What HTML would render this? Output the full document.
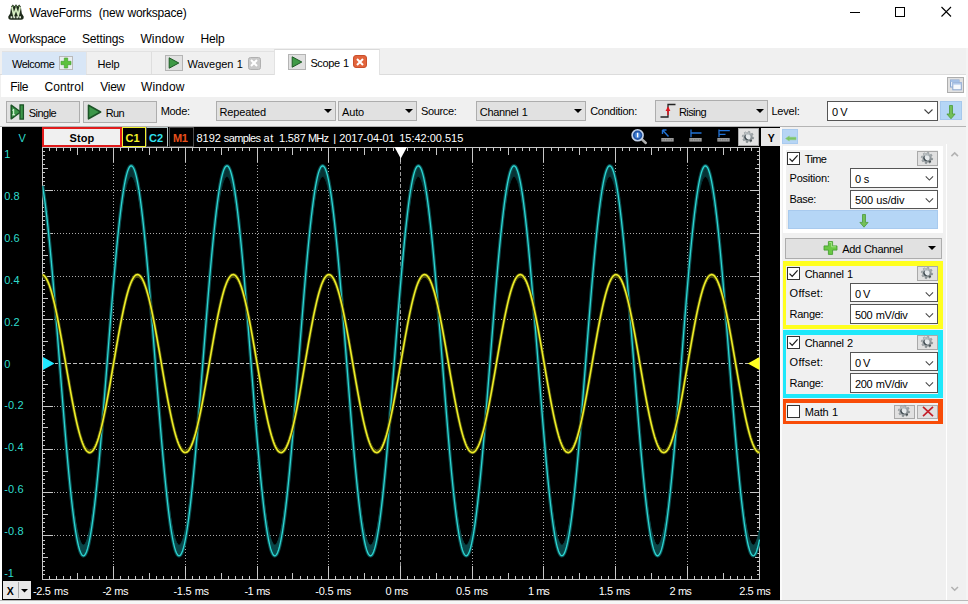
<!DOCTYPE html>
<html lang="en"><head><meta charset="utf-8"><title>WaveForms (new workspace)</title>
<style>
html,body{margin:0;padding:0;}
body{width:968px;height:604px;position:relative;overflow:hidden;background:#fff;
 font-family:"Liberation Sans",sans-serif;}
.t{position:absolute;white-space:pre;line-height:16px;}
.btn{background:#e1e1e1;border:1px solid #adadad;box-sizing:border-box;}
.combo{background:#e1e1e1;border:1px solid #adadad;box-sizing:border-box;}
.edit{background:#fff;border:1px solid #555;box-sizing:border-box;}
.abs{position:absolute;}
svg{position:absolute;overflow:visible;}
</style></head><body>
<div class="" style="position:absolute;left:0px;top:0px;width:968px;height:48px;background:#fff;"></div><svg style="left:8px;top:4px" width="16" height="16" viewBox="0 0 16 16">
<path d="M3.2 2.4 L4.8 0.5 L6.4 2.2 L8 0.3 L9.6 2.2 L11.2 0.5 L12.8 2.4 L13.8 9.5 L15.7 12.5 Q16 15.8 13 15.8 L3 15.8 Q0 15.8 0.3 12.5 L2.2 9.5 Z" fill="#1f2b1c"/>
<path d="M3.9 3 L5.7 11 L8 5 L10.3 11 L12.1 3" fill="none" stroke="#d4ecc0" stroke-width="1.8"/>
<path d="M4.9 1.6 V3 M8 1.4 V3 M11.1 1.6 V3" stroke="#7fae68" stroke-width="1"/>
<path d="M2.6 13.3h10.8" stroke="#dfe8d8" stroke-width="2" stroke-dasharray="1.7 1.2"/>
</svg><span class="t " style="left:29.50px;top:5.00px;font-size:12px;letter-spacing:-0.243px;color:#000;word-spacing:0.543px;">WaveForms  (new workspace)</span><svg style="left:0;top:0" width="968" height="30" viewBox="0 0 968 30" shape-rendering="crispEdges">
<rect x="850" y="12" width="10" height="1" fill="#000"/>
<rect x="895.5" y="7.5" width="9" height="9" fill="none" stroke="#000" stroke-width="1"/>
<path d="M941.5 7 L951 16.5 M951 7 L941.5 16.5" stroke="#000" stroke-width="1.1" shape-rendering="geometricPrecision"/>
</svg><span class="t " style="left:8.50px;top:31.00px;font-size:12px;letter-spacing:-0.289px;color:#000;">Workspace</span><span class="t " style="left:82.00px;top:31.00px;font-size:12px;letter-spacing:-0.170px;color:#000;">Settings</span><span class="t " style="left:140.40px;top:31.00px;font-size:12px;letter-spacing:0.153px;color:#000;">Window</span><span class="t " style="left:200.40px;top:31.00px;font-size:12px;letter-spacing:-0.145px;color:#000;">Help</span><div class="" style="position:absolute;left:0px;top:48px;width:968px;height:27px;background:#f0f0f0;"></div><div class="" style="position:absolute;left:0px;top:74px;width:968px;height:1px;background:#dcdcdc;"></div><div class="" style="position:absolute;left:2px;top:51px;width:272px;height:1px;background:#e2e2e2;"></div><div class="" style="position:absolute;left:2px;top:51.5px;width:84px;height:23.0px;background:#d8e6f6;"></div><span class="t " style="left:12.00px;top:56.00px;font-size:11px;letter-spacing:-0.478px;color:#000;">Welcome</span><div class="" style="position:absolute;left:59px;top:56px;width:14px;height:14px;background:#e9eef0;border:1px solid #b9b9b9;box-sizing:border-box;"></div><svg style="left:60px;top:57px" width="12" height="12" viewBox="0 0 12 12">
<path d="M4.3 1h3.4v3.3H11v3.4H7.7V11H4.3V7.7H1V4.3h3.3z" fill="#5cc23c" stroke="#3f9a2a" stroke-width=".6"/></svg><span class="t " style="left:97.50px;top:56.00px;font-size:11px;letter-spacing:-0.206px;color:#000;">Help</span><div class="" style="position:absolute;left:151px;top:52px;width:1px;height:22px;background:#dedede;"></div><div class="" style="position:absolute;left:86px;top:52px;width:1px;height:22px;background:#e4e4e4;"></div><div class="" style="position:absolute;left:165px;top:54.5px;width:18px;height:16.0px;background:#e1e1e1;border:1px solid #b4b4b4;box-sizing:border-box;"></div><svg style="left:168px;top:56.5px" width="12" height="12" viewBox="0 0 12 12"><path d="M1.2 0.8 L10.8 6 L1.2 11.2z" fill="#3f9a46" stroke="#1e5a26" stroke-width="1" stroke-linejoin="round"/></svg><span class="t " style="left:187.50px;top:56.00px;font-size:11px;letter-spacing:-0.017px;color:#000;word-spacing:0.317px;">Wavegen 1</span><div class="" style="position:absolute;left:247.5px;top:56.5px;width:13.0px;height:13.0px;background:#c9c9c9;border-radius:2.5px;border:1px solid #b0b0b0;box-sizing:border-box;"></div><svg style="left:250px;top:59px" width="8" height="8" viewBox="0 0 8 8"><path d="M1 1L7 7M7 1L1 7" stroke="#fff" stroke-width="2"/></svg><div class="" style="position:absolute;left:273.5px;top:48.7px;width:106.80000000000001px;height:26.299999999999997px;background:#fff;border-top:1px solid #dadada;border-left:1px solid #e2e2e2;border-right:1px solid #e2e2e2;box-sizing:border-box;"></div><div class="" style="position:absolute;left:288px;top:54px;width:18px;height:16px;background:#e1e1e1;border:1px solid #b4b4b4;box-sizing:border-box;"></div><svg style="left:291px;top:56px" width="12" height="12" viewBox="0 0 12 12"><path d="M1.2 0.8 L10.8 6 L1.2 11.2z" fill="#3f9a46" stroke="#1e5a26" stroke-width="1" stroke-linejoin="round"/></svg><span class="t " style="left:310.40px;top:55.00px;font-size:11px;letter-spacing:-0.394px;color:#000;word-spacing:0.694px;">Scope 1</span><div class="" style="position:absolute;left:353px;top:55.2px;width:14px;height:13.200000000000003px;background:#e2643c;border-radius:3px;border:1px solid #c94f2c;box-sizing:border-box;"></div><svg style="left:356px;top:57.8px" width="8" height="8" viewBox="0 0 8 8"><path d="M1 1L7 7M7 1L1 7" stroke="#fff" stroke-width="2"/></svg><div class="" style="position:absolute;left:0px;top:75px;width:968px;height:22px;background:#f0f0f0;"></div><div class="" style="position:absolute;left:1px;top:74.5px;width:965.5px;height:22.5px;background:#fff;"></div><span class="t " style="left:10.30px;top:79.00px;font-size:12px;letter-spacing:-0.434px;color:#000;">File</span><span class="t " style="left:44.40px;top:79.00px;font-size:12px;letter-spacing:0.088px;color:#000;">Control</span><span class="t " style="left:100.20px;top:79.00px;font-size:12px;letter-spacing:-0.248px;color:#000;">View</span><span class="t " style="left:141.10px;top:79.00px;font-size:12px;letter-spacing:0.120px;color:#000;">Window</span><div class="btn" style="position:absolute;left:947px;top:77px;width:17px;height:16px;"></div><svg style="left:949px;top:79px" width="13" height="12" viewBox="0 0 13 12">
<rect x="1.5" y="1" width="8.5" height="7" fill="#e6eef9" stroke="#8aa6cf" stroke-width="1"/>
<rect x="1.5" y="1" width="8.5" height="2" fill="#a4c0e6"/>
<rect x="3.8" y="3.6" width="8.5" height="7.2" fill="#f6f9fd" stroke="#8aa6cf" stroke-width="1"/>
<rect x="3.8" y="3.6" width="8.5" height="2" fill="#b0c8ea"/></svg><div class="" style="position:absolute;left:0px;top:97px;width:968px;height:30px;background:#f0f0f0;"></div><div class="btn" style="position:absolute;left:6px;top:101px;width:74px;height:22px;"></div><svg style="left:10px;top:104px" width="17" height="16" viewBox="0 0 17 16">
<path d="M1.2 1.2 L10.6 8 L1.2 14.8z" fill="#3c9749" stroke="#1c5427" stroke-width="1.5" stroke-linejoin="round"/>
<rect x="10" y="0.9" width="3.4" height="14.2" fill="#3c9749" stroke="#1c5427" stroke-width="1.3"/>
<path d="M2.3 6.4 L3.7 5.3 L3.7 10.8 M2.3 10.8 H5.1" fill="none" stroke="#e8ffe8" stroke-width="1"/></svg><span class="t " style="left:28.70px;top:105.00px;font-size:11px;letter-spacing:-0.513px;color:#000;">Single</span><div class="btn" style="position:absolute;left:83px;top:101px;width:74px;height:22px;"></div><svg style="left:86.6px;top:104px" width="16" height="16" viewBox="0 0 16 16">
<path d="M1.5 1.2 L13.6 8 L1.5 14.8z" fill="#3c9749" stroke="#1c5427" stroke-width="1.6" stroke-linejoin="round"/></svg><span class="t " style="left:105.80px;top:105.00px;font-size:11px;letter-spacing:-0.660px;color:#000;">Run</span><span class="t " style="left:160.70px;top:103.00px;font-size:11px;letter-spacing:-0.314px;color:#000;">Mode:</span><div class="combo" style="position:absolute;left:216px;top:101px;width:120px;height:20px;"></div><span class="t " style="left:219.60px;top:104.00px;font-size:11px;letter-spacing:-0.163px;color:#000;">Repeated</span><svg style="left:323.5px;top:109px" width="8.0" height="4" viewBox="0 0 8 4"><path d="M0 0h8L4 4z" fill="#000"/></svg><div class="combo" style="position:absolute;left:338px;top:101px;width:79px;height:20px;"></div><span class="t " style="left:342.00px;top:104.00px;font-size:11px;letter-spacing:-0.157px;color:#000;">Auto</span><svg style="left:404.8px;top:109px" width="8.0" height="4" viewBox="0 0 8 4"><path d="M0 0h8L4 4z" fill="#000"/></svg><span class="t " style="left:420.90px;top:103.00px;font-size:11px;letter-spacing:-0.344px;color:#000;">Source:</span><div class="combo" style="position:absolute;left:476px;top:101px;width:110px;height:20px;"></div><span class="t " style="left:479.80px;top:104.00px;font-size:11px;letter-spacing:-0.331px;color:#000;word-spacing:0.631px;">Channel 1</span><svg style="left:573.6px;top:109px" width="8.0" height="4" viewBox="0 0 8 4"><path d="M0 0h8L4 4z" fill="#000"/></svg><span class="t " style="left:590.20px;top:103.00px;font-size:11px;letter-spacing:-0.273px;color:#000;">Condition:</span><div class="combo" style="position:absolute;left:655px;top:100px;width:113px;height:22px;"></div><svg style="left:660px;top:103px" width="16" height="16" viewBox="0 0 16 16">
<path d="M0.5 14 H8 V1.5 H15.5" fill="none" stroke="#222" stroke-width="1.3"/>
<path d="M8 3.2 L5.6 8 H10.4z" fill="#e0141e"/><path d="M8 7v5" stroke="#e0141e" stroke-width="1.4"/></svg><span class="t " style="left:679.00px;top:104.00px;font-size:11px;letter-spacing:-0.611px;color:#000;">Rising</span><svg style="left:756px;top:109px" width="8" height="4" viewBox="0 0 8 4"><path d="M0 0h8L4 4z" fill="#000"/></svg><span class="t " style="left:771.40px;top:103.00px;font-size:11px;letter-spacing:-0.176px;color:#000;">Level:</span><div class="edit" style="position:absolute;left:827px;top:101px;width:111px;height:20px;"></div><span class="t " style="left:832.00px;top:104.00px;font-size:11px;letter-spacing:-1.255px;color:#000;word-spacing:1.555px;">0 V</span><svg style="left:924px;top:109px" width="9" height="5" viewBox="0 0 9 5"><path d="M0.5 0.5 L4.5 4.5 L8.5 0.5" fill="none" stroke="#444" stroke-width="1.1"/></svg><div class="" style="position:absolute;left:939.5px;top:101px;width:22.5px;height:19px;background:#b5d6f6;border:1px solid #a6c8ec;box-sizing:border-box;"></div><svg style="left:946px;top:104.8px" width="10" height="14.200000000000003" viewBox="0 0 10 14.200000000000003"><path d="M3.5 0.5 H6.5 V9.000000000000004 H9.1 L5 13.800000000000002 L0.9 9.000000000000004 H3.5z" fill="#74c058" stroke="#4a9a38" stroke-width=".8"/></svg><div class="" style="position:absolute;left:0px;top:126px;width:966px;height:1px;background:#b4b4b4;"></div><div class="" style="position:absolute;left:0px;top:127px;width:2px;height:473px;background:#fff;"></div><div class="" style="position:absolute;left:2px;top:127px;width:778px;height:473px;background:#000;"></div><svg style="left:0;top:0" width="968" height="604" viewBox="0 0 968 604"><g stroke="#c8c8c8" stroke-width="1" shape-rendering="crispEdges" fill="none"><path d="M113.5 147.0V579.5" stroke-dasharray="1 2" stroke-opacity=".85"/><path d="M42.0 190.5H759.5" stroke-dasharray="1 2" stroke-opacity=".85"/><path d="M185.5 147.0V579.5" stroke-dasharray="1 2" stroke-opacity=".85"/><path d="M42.0 233.5H759.5" stroke-dasharray="1 2" stroke-opacity=".85"/><path d="M257.5 147.0V579.5" stroke-dasharray="1 2" stroke-opacity=".85"/><path d="M42.0 276.5H759.5" stroke-dasharray="1 2" stroke-opacity=".85"/><path d="M328.5 147.0V579.5" stroke-dasharray="1 2" stroke-opacity=".85"/><path d="M42.0 319.5H759.5" stroke-dasharray="1 2" stroke-opacity=".85"/><path d="M400.5 147.5V579.5" stroke-dasharray="4 2" stroke="#9c9c9c"/><path d="M42.5 363.5H759.5" stroke-dasharray="4 2" stroke="#bebebe"/><path d="M472.5 147.0V579.5" stroke-dasharray="1 2" stroke-opacity=".85"/><path d="M42.0 406.5H759.5" stroke-dasharray="1 2" stroke-opacity=".85"/><path d="M543.5 147.0V579.5" stroke-dasharray="1 2" stroke-opacity=".85"/><path d="M42.0 449.5H759.5" stroke-dasharray="1 2" stroke-opacity=".85"/><path d="M615.5 147.0V579.5" stroke-dasharray="1 2" stroke-opacity=".85"/><path d="M42.0 492.5H759.5" stroke-dasharray="1 2" stroke-opacity=".85"/><path d="M687.5 147.0V579.5" stroke-dasharray="1 2" stroke-opacity=".85"/><path d="M42.0 535.5H759.5" stroke-dasharray="1 2" stroke-opacity=".85"/><rect x="42.5" y="147.5" width="717.0" height="432.0"/><path d="M42.5 147.5v14M42.5 579.5v-14M42.5 147.5h10M759.5 147.5h-10M49.5 147.5v3.5M49.5 579.5v-3.5M42.5 151.5h2.5M759.5 151.5h-2.5M56.5 147.5v3.5M56.5 579.5v-3.5M42.5 155.5h2.5M759.5 155.5h-2.5M63.5 147.5v3.5M63.5 579.5v-3.5M42.5 159.5h2.5M759.5 159.5h-2.5M70.5 147.5v3.5M70.5 579.5v-3.5M42.5 164.5h2.5M759.5 164.5h-2.5M77.5 147.5v7M77.5 579.5v-7M42.5 168.5h5M759.5 168.5h-5M85.5 147.5v3.5M85.5 579.5v-3.5M42.5 172.5h2.5M759.5 172.5h-2.5M92.5 147.5v3.5M92.5 579.5v-3.5M42.5 177.5h2.5M759.5 177.5h-2.5M99.5 147.5v3.5M99.5 579.5v-3.5M42.5 181.5h2.5M759.5 181.5h-2.5M106.5 147.5v3.5M106.5 579.5v-3.5M42.5 185.5h2.5M759.5 185.5h-2.5M113.5 147.5v14M113.5 579.5v-14M42.5 190.5h10M759.5 190.5h-10M120.5 147.5v3.5M120.5 579.5v-3.5M42.5 194.5h2.5M759.5 194.5h-2.5M128.5 147.5v3.5M128.5 579.5v-3.5M42.5 198.5h2.5M759.5 198.5h-2.5M135.5 147.5v3.5M135.5 579.5v-3.5M42.5 203.5h2.5M759.5 203.5h-2.5M142.5 147.5v3.5M142.5 579.5v-3.5M42.5 207.5h2.5M759.5 207.5h-2.5M149.5 147.5v7M149.5 579.5v-7M42.5 211.5h5M759.5 211.5h-5M156.5 147.5v3.5M156.5 579.5v-3.5M42.5 216.5h2.5M759.5 216.5h-2.5M163.5 147.5v3.5M163.5 579.5v-3.5M42.5 220.5h2.5M759.5 220.5h-2.5M171.5 147.5v3.5M171.5 579.5v-3.5M42.5 224.5h2.5M759.5 224.5h-2.5M178.5 147.5v3.5M178.5 579.5v-3.5M42.5 229.5h2.5M759.5 229.5h-2.5M185.5 147.5v14M185.5 579.5v-14M42.5 233.5h10M759.5 233.5h-10M192.5 147.5v3.5M192.5 579.5v-3.5M42.5 237.5h2.5M759.5 237.5h-2.5M199.5 147.5v3.5M199.5 579.5v-3.5M42.5 242.5h2.5M759.5 242.5h-2.5M206.5 147.5v3.5M206.5 579.5v-3.5M42.5 246.5h2.5M759.5 246.5h-2.5M214.5 147.5v3.5M214.5 579.5v-3.5M42.5 250.5h2.5M759.5 250.5h-2.5M221.5 147.5v7M221.5 579.5v-7M42.5 255.5h5M759.5 255.5h-5M228.5 147.5v3.5M228.5 579.5v-3.5M42.5 259.5h2.5M759.5 259.5h-2.5M235.5 147.5v3.5M235.5 579.5v-3.5M42.5 263.5h2.5M759.5 263.5h-2.5M242.5 147.5v3.5M242.5 579.5v-3.5M42.5 267.5h2.5M759.5 267.5h-2.5M249.5 147.5v3.5M249.5 579.5v-3.5M42.5 272.5h2.5M759.5 272.5h-2.5M257.5 147.5v14M257.5 579.5v-14M42.5 276.5h10M759.5 276.5h-10M264.5 147.5v3.5M264.5 579.5v-3.5M42.5 280.5h2.5M759.5 280.5h-2.5M271.5 147.5v3.5M271.5 579.5v-3.5M42.5 285.5h2.5M759.5 285.5h-2.5M278.5 147.5v3.5M278.5 579.5v-3.5M42.5 289.5h2.5M759.5 289.5h-2.5M285.5 147.5v3.5M285.5 579.5v-3.5M42.5 293.5h2.5M759.5 293.5h-2.5M292.5 147.5v7M292.5 579.5v-7M42.5 298.5h5M759.5 298.5h-5M300.5 147.5v3.5M300.5 579.5v-3.5M42.5 302.5h2.5M759.5 302.5h-2.5M307.5 147.5v3.5M307.5 579.5v-3.5M42.5 306.5h2.5M759.5 306.5h-2.5M314.5 147.5v3.5M314.5 579.5v-3.5M42.5 311.5h2.5M759.5 311.5h-2.5M321.5 147.5v3.5M321.5 579.5v-3.5M42.5 315.5h2.5M759.5 315.5h-2.5M328.5 147.5v14M328.5 579.5v-14M42.5 319.5h10M759.5 319.5h-10M335.5 147.5v3.5M335.5 579.5v-3.5M42.5 324.5h2.5M759.5 324.5h-2.5M343.5 147.5v3.5M343.5 579.5v-3.5M42.5 328.5h2.5M759.5 328.5h-2.5M350.5 147.5v3.5M350.5 579.5v-3.5M42.5 332.5h2.5M759.5 332.5h-2.5M357.5 147.5v3.5M357.5 579.5v-3.5M42.5 337.5h2.5M759.5 337.5h-2.5M364.5 147.5v7M364.5 579.5v-7M42.5 341.5h5M759.5 341.5h-5M371.5 147.5v3.5M371.5 579.5v-3.5M42.5 345.5h2.5M759.5 345.5h-2.5M378.5 147.5v3.5M378.5 579.5v-3.5M42.5 350.5h2.5M759.5 350.5h-2.5M386.5 147.5v3.5M386.5 579.5v-3.5M42.5 354.5h2.5M759.5 354.5h-2.5M393.5 147.5v3.5M393.5 579.5v-3.5M42.5 358.5h2.5M759.5 358.5h-2.5M400.5 147.5v14M400.5 579.5v-14M42.5 363.5h10M759.5 363.5h-10M407.5 147.5v3.5M407.5 579.5v-3.5M42.5 367.5h2.5M759.5 367.5h-2.5M414.5 147.5v3.5M414.5 579.5v-3.5M42.5 371.5h2.5M759.5 371.5h-2.5M422.5 147.5v3.5M422.5 579.5v-3.5M42.5 375.5h2.5M759.5 375.5h-2.5M429.5 147.5v3.5M429.5 579.5v-3.5M42.5 380.5h2.5M759.5 380.5h-2.5M436.5 147.5v7M436.5 579.5v-7M42.5 384.5h5M759.5 384.5h-5M443.5 147.5v3.5M443.5 579.5v-3.5M42.5 388.5h2.5M759.5 388.5h-2.5M450.5 147.5v3.5M450.5 579.5v-3.5M42.5 393.5h2.5M759.5 393.5h-2.5M457.5 147.5v3.5M457.5 579.5v-3.5M42.5 397.5h2.5M759.5 397.5h-2.5M465.5 147.5v3.5M465.5 579.5v-3.5M42.5 401.5h2.5M759.5 401.5h-2.5M472.5 147.5v14M472.5 579.5v-14M42.5 406.5h10M759.5 406.5h-10M479.5 147.5v3.5M479.5 579.5v-3.5M42.5 410.5h2.5M759.5 410.5h-2.5M486.5 147.5v3.5M486.5 579.5v-3.5M42.5 414.5h2.5M759.5 414.5h-2.5M493.5 147.5v3.5M493.5 579.5v-3.5M42.5 419.5h2.5M759.5 419.5h-2.5M500.5 147.5v3.5M500.5 579.5v-3.5M42.5 423.5h2.5M759.5 423.5h-2.5M508.5 147.5v7M508.5 579.5v-7M42.5 427.5h5M759.5 427.5h-5M515.5 147.5v3.5M515.5 579.5v-3.5M42.5 432.5h2.5M759.5 432.5h-2.5M522.5 147.5v3.5M522.5 579.5v-3.5M42.5 436.5h2.5M759.5 436.5h-2.5M529.5 147.5v3.5M529.5 579.5v-3.5M42.5 440.5h2.5M759.5 440.5h-2.5M536.5 147.5v3.5M536.5 579.5v-3.5M42.5 445.5h2.5M759.5 445.5h-2.5M543.5 147.5v14M543.5 579.5v-14M42.5 449.5h10M759.5 449.5h-10M551.5 147.5v3.5M551.5 579.5v-3.5M42.5 453.5h2.5M759.5 453.5h-2.5M558.5 147.5v3.5M558.5 579.5v-3.5M42.5 458.5h2.5M759.5 458.5h-2.5M565.5 147.5v3.5M565.5 579.5v-3.5M42.5 462.5h2.5M759.5 462.5h-2.5M572.5 147.5v3.5M572.5 579.5v-3.5M42.5 466.5h2.5M759.5 466.5h-2.5M579.5 147.5v7M579.5 579.5v-7M42.5 471.5h5M759.5 471.5h-5M586.5 147.5v3.5M586.5 579.5v-3.5M42.5 475.5h2.5M759.5 475.5h-2.5M594.5 147.5v3.5M594.5 579.5v-3.5M42.5 479.5h2.5M759.5 479.5h-2.5M601.5 147.5v3.5M601.5 579.5v-3.5M42.5 483.5h2.5M759.5 483.5h-2.5M608.5 147.5v3.5M608.5 579.5v-3.5M42.5 488.5h2.5M759.5 488.5h-2.5M615.5 147.5v14M615.5 579.5v-14M42.5 492.5h10M759.5 492.5h-10M622.5 147.5v3.5M622.5 579.5v-3.5M42.5 496.5h2.5M759.5 496.5h-2.5M629.5 147.5v3.5M629.5 579.5v-3.5M42.5 501.5h2.5M759.5 501.5h-2.5M637.5 147.5v3.5M637.5 579.5v-3.5M42.5 505.5h2.5M759.5 505.5h-2.5M644.5 147.5v3.5M644.5 579.5v-3.5M42.5 509.5h2.5M759.5 509.5h-2.5M651.5 147.5v7M651.5 579.5v-7M42.5 514.5h5M759.5 514.5h-5M658.5 147.5v3.5M658.5 579.5v-3.5M42.5 518.5h2.5M759.5 518.5h-2.5M665.5 147.5v3.5M665.5 579.5v-3.5M42.5 522.5h2.5M759.5 522.5h-2.5M672.5 147.5v3.5M672.5 579.5v-3.5M42.5 527.5h2.5M759.5 527.5h-2.5M680.5 147.5v3.5M680.5 579.5v-3.5M42.5 531.5h2.5M759.5 531.5h-2.5M687.5 147.5v14M687.5 579.5v-14M42.5 535.5h10M759.5 535.5h-10M694.5 147.5v3.5M694.5 579.5v-3.5M42.5 540.5h2.5M759.5 540.5h-2.5M701.5 147.5v3.5M701.5 579.5v-3.5M42.5 544.5h2.5M759.5 544.5h-2.5M708.5 147.5v3.5M708.5 579.5v-3.5M42.5 548.5h2.5M759.5 548.5h-2.5M715.5 147.5v3.5M715.5 579.5v-3.5M42.5 553.5h2.5M759.5 553.5h-2.5M723.5 147.5v7M723.5 579.5v-7M42.5 557.5h5M759.5 557.5h-5M730.5 147.5v3.5M730.5 579.5v-3.5M42.5 561.5h2.5M759.5 561.5h-2.5M737.5 147.5v3.5M737.5 579.5v-3.5M42.5 566.5h2.5M759.5 566.5h-2.5M744.5 147.5v3.5M744.5 579.5v-3.5M42.5 570.5h2.5M759.5 570.5h-2.5M751.5 147.5v3.5M751.5 579.5v-3.5M42.5 574.5h2.5M759.5 574.5h-2.5M759.5 147.5v14M759.5 579.5v-14M42.5 579.5h10M759.5 579.5h-10"/></g><clipPath id="pc"><rect x="42.5" y="147.5" width="717.5" height="432.0"/></clipPath><g clip-path="url(#pc)" fill="none" stroke-linejoin="round"><clipPath id="pu"><rect x="42.5" y="147.5" width="717.5" height="216.0"/></clipPath><clipPath id="pl"><rect x="42.5" y="363.5" width="717.5" height="216.0"/></clipPath><polygon clip-path="url(#pu)" points="42.5,185.9 43.5,191.9 44.5,198.7 45.5,206.1 46.5,214.3 47.5,223.0 48.5,232.4 49.5,242.3 50.5,252.7 51.5,263.6 52.5,274.9 53.5,286.5 54.5,298.5 55.5,310.8 56.5,323.3 57.5,335.9 58.5,348.6 59.5,361.4 60.5,374.2 61.5,387.0 62.5,399.6 63.5,412.0 64.5,424.3 65.5,436.2 66.5,447.9 67.5,459.1 68.5,470.0 69.5,480.3 70.5,490.2 71.5,499.5 72.5,508.2 73.5,516.2 74.5,523.6 75.5,530.3 76.5,536.3 77.5,541.5 78.5,545.9 79.5,549.5 80.5,552.3 81.5,554.3 82.5,555.5 83.5,555.8 84.5,555.3 85.5,553.9 86.5,551.7 87.5,548.7 88.5,544.9 89.5,540.2 90.5,534.9 91.5,528.7 92.5,521.8 93.5,514.3 94.5,506.1 95.5,497.2 96.5,487.8 97.5,477.8 98.5,467.3 99.5,456.4 100.5,445.0 101.5,433.3 102.5,421.2 103.5,408.9 104.5,396.4 105.5,383.8 106.5,371.0 107.5,358.2 108.5,345.5 109.5,332.7 110.5,320.1 111.5,307.7 112.5,295.5 113.5,283.6 114.5,272.0 115.5,260.8 116.5,250.0 117.5,239.8 118.5,230.0 119.5,220.8 120.5,212.2 121.5,204.2 122.5,196.9 123.5,190.3 124.5,184.5 125.5,179.4 126.5,175.1 127.5,171.6 128.5,168.9 129.5,167.0 130.5,166.0 131.5,165.8 132.5,166.5 133.5,168.0 134.5,170.3 135.5,173.4 136.5,177.4 137.5,182.1 138.5,187.6 139.5,193.9 140.5,200.9 141.5,208.5 142.5,216.8 143.5,225.8 144.5,235.3 145.5,245.4 146.5,255.9 147.5,266.9 148.5,278.3 149.5,290.1 150.5,302.2 151.5,314.5 152.5,327.0 153.5,339.7 154.5,352.5 155.5,365.3 156.5,378.1 157.5,390.8 158.5,403.3 159.5,415.7 160.5,427.9 161.5,439.8 162.5,451.3 163.5,462.4 164.5,473.1 165.5,483.3 166.5,493.0 167.5,502.1 168.5,510.7 169.5,518.5 170.5,525.7 171.5,532.2 172.5,537.9 173.5,542.9 174.5,547.1 175.5,550.5 176.5,553.0 177.5,554.8 178.5,555.7 179.5,555.7 180.5,554.9 181.5,553.3 182.5,550.9 183.5,547.6 184.5,543.6 185.5,538.7 186.5,533.1 187.5,526.7 188.5,519.6 189.5,511.9 190.5,503.5 191.5,494.4 192.5,484.8 193.5,474.7 194.5,464.1 195.5,453.0 196.5,441.5 197.5,429.7 198.5,417.6 199.5,405.2 200.5,392.7 201.5,380.0 202.5,367.2 203.5,354.4 204.5,341.6 205.5,328.9 206.5,316.4 207.5,304.0 208.5,291.9 209.5,280.1 210.5,268.6 211.5,257.5 212.5,246.9 213.5,236.8 214.5,227.2 215.5,218.1 216.5,209.7 217.5,202.0 218.5,194.9 219.5,188.5 220.5,182.9 221.5,178.0 222.5,174.0 223.5,170.7 224.5,168.3 225.5,166.7 226.5,165.9 227.5,165.9 228.5,166.8 229.5,168.6 230.5,171.1 231.5,174.5 232.5,178.7 233.5,183.7 234.5,189.4 235.5,195.9 236.5,203.1 237.5,210.9 238.5,219.5 239.5,228.6 240.5,238.3 241.5,248.5 242.5,259.2 243.5,270.3 244.5,281.8 245.5,293.7 246.5,305.9 247.5,318.3 248.5,330.8 249.5,343.5 250.5,356.3 251.5,369.1 252.5,381.9 253.5,394.6 254.5,407.1 255.5,419.4 256.5,431.5 257.5,443.3 258.5,454.7 259.5,465.7 260.5,476.2 261.5,486.3 262.5,495.8 263.5,504.8 264.5,513.1 265.5,520.7 266.5,527.7 267.5,534.0 268.5,539.5 269.5,544.2 270.5,548.2 271.5,551.3 272.5,553.6 273.5,555.1 274.5,555.8 275.5,555.6 276.5,554.6 277.5,552.7 278.5,550.0 279.5,546.5 280.5,542.2 281.5,537.1 282.5,531.3 283.5,524.7 284.5,517.4 285.5,509.4 286.5,500.8 287.5,491.6 288.5,481.8 289.5,471.6 290.5,460.8 291.5,449.6 292.5,438.0 293.5,426.1 294.5,413.9 295.5,401.5 296.5,388.9 297.5,376.1 298.5,363.4 299.5,350.6 300.5,337.8 301.5,325.2 302.5,312.7 303.5,300.4 304.5,288.3 305.5,276.6 306.5,265.2 307.5,254.3 308.5,243.8 309.5,233.8 310.5,224.4 311.5,215.5 312.5,207.3 313.5,199.8 314.5,192.9 315.5,186.7 316.5,181.4 317.5,176.7 318.5,172.9 319.5,169.9 320.5,167.7 321.5,166.3 322.5,165.8 323.5,166.1 324.5,167.3 325.5,169.3 326.5,172.1 327.5,175.7 328.5,180.1 329.5,185.3 330.5,191.3 331.5,198.0 332.5,205.4 333.5,213.4 334.5,222.1 335.5,231.4 336.5,241.3 337.5,251.6 338.5,262.5 339.5,273.7 340.5,285.4 341.5,297.3 342.5,309.6 343.5,322.0 344.5,334.6 345.5,347.4 346.5,360.2 347.5,373.0 348.5,385.7 349.5,398.3 350.5,410.8 351.5,423.1 352.5,435.1 353.5,446.7 354.5,458.0 355.5,468.9 356.5,479.3 357.5,489.2 358.5,498.6 359.5,507.3 360.5,515.5 361.5,522.9 362.5,529.7 363.5,535.7 364.5,541.0 365.5,545.5 366.5,549.2 367.5,552.1 368.5,554.2 369.5,555.4 370.5,555.8 371.5,555.4 372.5,554.1 373.5,552.0 374.5,549.0 375.5,545.3 376.5,540.7 377.5,535.4 378.5,529.4 379.5,522.6 380.5,515.1 381.5,506.9 382.5,498.1 383.5,488.7 384.5,478.8 385.5,468.4 386.5,457.5 387.5,446.1 388.5,434.5 389.5,422.5 390.5,410.2 391.5,397.7 392.5,385.1 393.5,372.3 394.5,359.5 395.5,346.7 396.5,334.0 397.5,321.4 398.5,308.9 399.5,296.7 400.5,284.8 401.5,273.2 402.5,261.9 403.5,251.1 404.5,240.8 405.5,230.9 406.5,221.7 407.5,213.0 408.5,205.0 409.5,197.6 410.5,191.0 411.5,185.1 412.5,179.9 413.5,175.5 414.5,171.9 415.5,169.1 416.5,167.2 417.5,166.1 418.5,165.8 419.5,166.4 420.5,167.8 421.5,170.0 422.5,173.1 423.5,176.9 424.5,181.6 425.5,187.0 426.5,193.2 427.5,200.1 428.5,207.7 429.5,216.0 430.5,224.9 431.5,234.3 432.5,244.3 433.5,254.8 434.5,265.8 435.5,277.2 436.5,288.9 437.5,301.0 438.5,313.3 439.5,325.8 440.5,338.4 441.5,351.2 442.5,364.0 443.5,376.8 444.5,389.5 445.5,402.1 446.5,414.5 447.5,426.7 448.5,438.6 449.5,450.2 450.5,461.3 451.5,472.1 452.5,482.3 453.5,492.1 454.5,501.3 455.5,509.8 456.5,517.8 457.5,525.0 458.5,531.6 459.5,537.4 460.5,542.4 461.5,546.7 462.5,550.2 463.5,552.8 464.5,554.6 465.5,555.6 466.5,555.8 467.5,555.1 468.5,553.5 469.5,551.2 470.5,548.0 471.5,544.0 472.5,539.2 473.5,533.7 474.5,527.4 475.5,520.4 476.5,512.7 477.5,504.3 478.5,495.4 479.5,485.8 480.5,475.7 481.5,465.1 482.5,454.1 483.5,442.7 484.5,430.9 485.5,418.8 486.5,406.5 487.5,393.9 488.5,381.2 489.5,368.5 490.5,355.7 491.5,342.9 492.5,330.2 493.5,317.6 494.5,305.2 495.5,293.1 496.5,281.3 497.5,269.7 498.5,258.6 499.5,247.9 500.5,237.8 501.5,228.1 502.5,219.0 503.5,210.5 504.5,202.7 505.5,195.6 506.5,189.1 507.5,183.4 508.5,178.5 509.5,174.3 510.5,171.0 511.5,168.5 512.5,166.8 513.5,165.9 514.5,165.9 515.5,166.7 516.5,168.4 517.5,170.9 518.5,174.2 519.5,178.3 520.5,183.2 521.5,188.8 522.5,195.2 523.5,202.3 524.5,210.1 525.5,218.6 526.5,227.6 527.5,237.3 528.5,247.4 529.5,258.1 530.5,269.2 531.5,280.7 532.5,292.5 533.5,304.6 534.5,317.0 535.5,329.6 536.5,342.3 537.5,355.0 538.5,367.8 539.5,380.6 540.5,393.3 541.5,405.8 542.5,418.2 543.5,430.3 544.5,442.1 545.5,453.6 546.5,464.6 547.5,475.2 548.5,485.3 549.5,494.9 550.5,503.9 551.5,512.3 552.5,520.0 553.5,527.1 554.5,533.4 555.5,539.0 556.5,543.8 557.5,547.8 558.5,551.0 559.5,553.4 560.5,555.0 561.5,555.7 562.5,555.6 563.5,554.7 564.5,552.9 565.5,550.3 566.5,546.9 567.5,542.7 568.5,537.6 569.5,531.9 570.5,525.4 571.5,518.1 572.5,510.2 573.5,501.7 574.5,492.6 575.5,482.8 576.5,472.6 577.5,461.9 578.5,450.7 579.5,439.2 580.5,427.3 581.5,415.1 582.5,402.7 583.5,390.1 584.5,377.4 585.5,364.6 586.5,351.8 587.5,339.1 588.5,326.4 589.5,313.9 590.5,301.6 591.5,289.5 592.5,277.8 593.5,266.4 594.5,255.4 595.5,244.8 596.5,234.8 597.5,225.3 598.5,216.4 599.5,208.1 600.5,200.5 601.5,193.5 602.5,187.3 603.5,181.9 604.5,177.2 605.5,173.3 606.5,170.2 607.5,167.9 608.5,166.4 609.5,165.8 610.5,166.1 611.5,167.1 612.5,169.0 613.5,171.8 614.5,175.3 615.5,179.6 616.5,184.8 617.5,190.7 618.5,197.3 619.5,204.6 620.5,212.6 621.5,221.2 622.5,230.5 623.5,240.3 624.5,250.6 625.5,261.4 626.5,272.6 627.5,284.2 628.5,296.1 629.5,308.3 630.5,320.8 631.5,333.4 632.5,346.1 633.5,358.9 634.5,371.7 635.5,384.4 636.5,397.1 637.5,409.6 638.5,421.8 639.5,433.9 640.5,445.6 641.5,456.9 642.5,467.8 643.5,478.3 644.5,488.3 645.5,497.7 646.5,506.5 647.5,514.7 648.5,522.2 649.5,529.0 650.5,535.1 651.5,540.5 652.5,545.1 653.5,548.9 654.5,551.8 655.5,554.0 656.5,555.3 657.5,555.8 658.5,555.4 659.5,554.2 660.5,552.2 661.5,549.4 662.5,545.7 663.5,541.2 664.5,536.0 665.5,530.0 666.5,523.3 667.5,515.8 668.5,507.8 669.5,499.0 670.5,489.7 671.5,479.8 672.5,469.4 673.5,458.6 674.5,447.3 675.5,435.6 676.5,423.7 677.5,411.4 678.5,399.0 679.5,386.3 680.5,373.6 681.5,360.8 682.5,348.0 683.5,335.3 684.5,322.6 685.5,310.2 686.5,297.9 687.5,286.0 688.5,274.3 689.5,263.0 690.5,252.2 691.5,241.8 692.5,231.9 693.5,222.6 694.5,213.8 695.5,205.8 696.5,198.3 697.5,191.6 698.5,185.6 699.5,180.4 700.5,175.9 701.5,172.2 702.5,169.4 703.5,167.4 704.5,166.2 705.5,165.8 706.5,166.3 707.5,167.6 708.5,169.8 709.5,172.7 710.5,176.5 711.5,181.1 712.5,186.5 713.5,192.6 714.5,199.4 715.5,206.9 716.5,215.1 717.5,223.9 718.5,233.3 719.5,243.3 720.5,253.8 721.5,264.7 722.5,276.0 723.5,287.7 724.5,299.8 725.5,312.0 726.5,324.5 727.5,337.2 728.5,349.9 729.5,362.7 730.5,375.5 731.5,388.2 732.5,400.8 733.5,413.3 734.5,425.5 735.5,437.4 736.5,449.0 737.5,460.2 738.5,471.0 739.5,481.3 740.5,491.1 741.5,500.4 742.5,509.0 743.5,517.0 744.5,524.3 745.5,530.9 746.5,536.8 747.5,542.0 748.5,546.3 749.5,549.8 750.5,552.6 751.5,554.5 752.5,555.5 753.5,555.8 754.5,555.2 755.5,553.7 756.5,551.4 757.5,548.3 758.5,544.4 759.5,539.7 759.5,529.9 758.5,534.3 757.5,538.0 756.5,541.0 755.5,543.1 754.5,544.5 753.5,545.1 752.5,544.8 751.5,543.8 750.5,542.0 749.5,539.4 748.5,536.1 747.5,532.0 746.5,527.1 745.5,521.6 744.5,515.3 743.5,508.4 742.5,500.9 741.5,492.7 740.5,484.0 739.5,474.7 738.5,465.0 737.5,454.8 736.5,444.2 735.5,433.2 734.5,421.9 733.5,410.4 732.5,398.6 731.5,386.7 730.5,374.7 729.5,362.6 728.5,350.5 727.5,338.5 726.5,326.5 725.5,314.7 724.5,303.1 723.5,291.8 722.5,280.7 721.5,270.0 720.5,259.7 719.5,249.8 718.5,240.4 717.5,231.5 716.5,223.1 715.5,215.4 714.5,208.3 713.5,201.8 712.5,196.1 711.5,191.0 710.5,186.7 709.5,183.1 708.5,180.3 707.5,178.2 706.5,177.0 705.5,176.5 704.5,176.9 703.5,178.0 702.5,179.9 701.5,182.6 700.5,186.1 699.5,190.3 698.5,195.2 697.5,200.9 696.5,207.3 695.5,214.3 694.5,221.9 693.5,230.2 692.5,239.0 691.5,248.3 690.5,258.1 689.5,268.4 688.5,279.1 687.5,290.1 686.5,301.4 685.5,313.0 684.5,324.7 683.5,336.7 682.5,348.7 681.5,360.8 680.5,372.9 679.5,384.9 678.5,396.9 677.5,408.6 676.5,420.2 675.5,431.5 674.5,442.5 673.5,453.2 672.5,463.5 671.5,473.3 670.5,482.6 669.5,491.4 668.5,499.7 667.5,507.3 666.5,514.3 665.5,520.7 664.5,526.4 663.5,531.3 662.5,535.5 661.5,539.0 660.5,541.7 659.5,543.6 658.5,544.7 657.5,545.1 656.5,544.6 655.5,543.4 654.5,541.3 653.5,538.5 652.5,534.9 651.5,530.6 650.5,525.5 649.5,519.8 648.5,513.3 647.5,506.2 646.5,498.5 645.5,490.1 644.5,481.2 643.5,471.8 642.5,461.9 641.5,451.6 640.5,440.9 639.5,429.8 638.5,418.5 637.5,406.9 636.5,395.1 635.5,383.1 634.5,371.1 633.5,359.0 632.5,346.9 631.5,334.9 630.5,323.0 629.5,311.2 628.5,299.7 627.5,288.4 626.5,277.4 625.5,266.8 624.5,256.6 623.5,246.9 622.5,237.6 621.5,228.9 620.5,220.7 619.5,213.2 618.5,206.3 617.5,200.0 616.5,194.5 615.5,189.6 614.5,185.5 613.5,182.2 612.5,179.6 611.5,177.8 610.5,176.8 609.5,176.5 608.5,177.1 607.5,178.5 606.5,180.6 605.5,183.6 604.5,187.3 603.5,191.7 602.5,196.9 601.5,202.7 600.5,209.3 599.5,216.5 598.5,224.3 597.5,232.8 596.5,241.7 595.5,251.2 594.5,261.2 593.5,271.6 592.5,282.3 591.5,293.4 590.5,304.8 589.5,316.5 588.5,328.3 587.5,340.3 586.5,352.3 585.5,364.4 584.5,376.5 583.5,388.5 582.5,400.4 581.5,412.1 580.5,423.6 579.5,434.9 578.5,445.8 577.5,456.3 576.5,466.5 575.5,476.1 574.5,485.3 573.5,494.0 572.5,502.0 571.5,509.5 570.5,516.3 569.5,522.5 568.5,527.9 567.5,532.7 566.5,536.6 565.5,539.9 564.5,542.3 563.5,544.0 562.5,544.9 561.5,545.0 560.5,544.3 559.5,542.8 558.5,540.6 557.5,537.5 556.5,533.7 555.5,529.2 554.5,523.9 553.5,517.9 552.5,511.3 551.5,504.0 550.5,496.0 549.5,487.5 548.5,478.5 547.5,468.9 546.5,458.9 545.5,448.4 544.5,437.6 543.5,426.5 542.5,415.0 541.5,403.4 540.5,391.5 539.5,379.5 538.5,367.5 537.5,355.4 536.5,343.3 535.5,331.3 534.5,319.4 533.5,307.7 532.5,296.3 531.5,285.1 530.5,274.2 529.5,263.7 528.5,253.7 527.5,244.1 526.5,235.0 525.5,226.4 524.5,218.4 523.5,211.0 522.5,204.3 521.5,198.3 520.5,192.9 519.5,188.3 518.5,184.4 517.5,181.3 516.5,179.0 515.5,177.4 514.5,176.6 513.5,176.6 512.5,177.4 511.5,179.1 510.5,181.4 509.5,184.6 508.5,188.5 507.5,193.2 506.5,198.6 505.5,204.6 504.5,211.4 503.5,218.8 502.5,226.8 501.5,235.4 500.5,244.5 499.5,254.2 498.5,264.2 497.5,274.8 496.5,285.6 495.5,296.8 494.5,308.3 493.5,320.0 492.5,331.9 491.5,343.9 490.5,356.0 489.5,368.1 488.5,380.1 487.5,392.1 486.5,404.0 485.5,415.6 484.5,427.0 483.5,438.2 482.5,449.0 481.5,459.4 480.5,469.4 479.5,478.9 478.5,488.0 477.5,496.4 476.5,504.3 475.5,511.6 474.5,518.2 473.5,524.2 472.5,529.4 471.5,533.9 470.5,537.7 469.5,540.7 468.5,542.9 467.5,544.4 466.5,545.0 465.5,544.9 464.5,544.0 463.5,542.2 462.5,539.7 461.5,536.5 460.5,532.4 459.5,527.7 458.5,522.2 457.5,516.0 456.5,509.1 455.5,501.6 454.5,493.5 453.5,484.9 452.5,475.7 451.5,466.0 450.5,455.8 449.5,445.2 448.5,434.3 447.5,423.1 446.5,411.6 445.5,399.8 444.5,387.9 443.5,375.9 442.5,363.8 441.5,351.7 440.5,339.7 439.5,327.7 438.5,315.9 437.5,304.3 436.5,292.9 435.5,281.8 434.5,271.0 433.5,260.7 432.5,250.7 431.5,241.3 430.5,232.3 429.5,223.9 428.5,216.1 427.5,209.0 426.5,202.4 425.5,196.6 424.5,191.5 423.5,187.1 422.5,183.4 421.5,180.5 420.5,178.4 419.5,177.1 418.5,176.5 417.5,176.8 416.5,177.8 415.5,179.7 414.5,182.3 413.5,185.7 412.5,189.8 411.5,194.7 410.5,200.3 409.5,206.6 408.5,213.6 407.5,221.1 406.5,229.3 405.5,238.1 404.5,247.4 403.5,257.1 402.5,267.4 401.5,278.0 400.5,289.0 399.5,300.2 398.5,311.8 397.5,323.6 396.5,335.5 395.5,347.5 394.5,359.6 393.5,371.7 392.5,383.7 391.5,395.7 390.5,407.5 389.5,419.1 388.5,430.4 387.5,441.5 386.5,452.2 385.5,462.5 384.5,472.3 383.5,481.7 382.5,490.6 381.5,498.9 380.5,506.6 379.5,513.7 378.5,520.1 377.5,525.8 376.5,530.8 375.5,535.1 374.5,538.7 373.5,541.5 372.5,543.4 371.5,544.7 370.5,545.1 369.5,544.7 368.5,543.5 367.5,541.6 366.5,538.8 365.5,535.3 364.5,531.1 363.5,526.1 362.5,520.4 361.5,514.0 360.5,506.9 359.5,499.3 358.5,491.0 357.5,482.2 356.5,472.8 355.5,463.0 354.5,452.7 353.5,442.0 352.5,431.0 351.5,419.6 350.5,408.1 349.5,396.3 348.5,384.3 347.5,372.3 346.5,360.2 345.5,348.1 344.5,336.1 343.5,324.1 342.5,312.4 341.5,300.8 340.5,289.5 339.5,278.5 338.5,267.9 337.5,257.6 336.5,247.8 335.5,238.5 334.5,229.8 333.5,221.5 332.5,213.9 331.5,206.9 330.5,200.6 329.5,195.0 328.5,190.1 327.5,185.9 326.5,182.5 325.5,179.8 324.5,177.9 323.5,176.8 322.5,176.5 321.5,177.0 320.5,178.3 319.5,180.4 318.5,183.2 317.5,186.9 316.5,191.2 315.5,196.3 314.5,202.1 313.5,208.6 312.5,215.8 311.5,223.5 310.5,231.9 309.5,240.8 308.5,250.2 307.5,260.2 306.5,270.5 305.5,281.2 304.5,292.3 303.5,303.7 302.5,315.3 301.5,327.1 300.5,339.1 299.5,351.1 298.5,363.2 297.5,375.3 296.5,387.3 295.5,399.2 294.5,411.0 293.5,422.5 292.5,433.8 291.5,444.7 290.5,455.3 289.5,465.5 288.5,475.2 287.5,484.4 286.5,493.1 285.5,501.2 284.5,508.8 283.5,515.7 282.5,521.9 281.5,527.4 280.5,532.2 279.5,536.3 278.5,539.6 277.5,542.1 276.5,543.9 275.5,544.9 274.5,545.0 273.5,544.4 272.5,543.0 271.5,540.8 270.5,537.9 269.5,534.1 268.5,529.7 267.5,524.5 266.5,518.5 265.5,512.0 264.5,504.7 263.5,496.8 262.5,488.4 261.5,479.4 260.5,469.9 259.5,459.9 258.5,449.5 257.5,438.7 256.5,427.6 255.5,416.2 254.5,404.5 253.5,392.7 252.5,380.7 251.5,368.7 250.5,356.6 249.5,344.5 248.5,332.5 247.5,320.6 246.5,308.9 245.5,297.4 244.5,286.2 243.5,275.3 242.5,264.8 241.5,254.7 240.5,245.0 239.5,235.8 238.5,227.2 237.5,219.2 236.5,211.8 235.5,205.0 234.5,198.8 233.5,193.4 232.5,188.7 231.5,184.8 230.5,181.6 229.5,179.2 228.5,177.5 227.5,176.7 226.5,176.6 225.5,177.3 224.5,178.9 223.5,181.2 222.5,184.2 221.5,188.1 220.5,192.7 219.5,198.0 218.5,204.0 217.5,210.7 216.5,218.0 215.5,226.0 214.5,234.5 213.5,243.6 212.5,253.2 211.5,263.2 210.5,273.7 209.5,284.5 208.5,295.7 207.5,307.1 206.5,318.8 205.5,330.7 204.5,342.7 203.5,354.8 202.5,366.8 201.5,378.9 200.5,390.9 199.5,402.8 198.5,414.5 197.5,425.9 196.5,437.1 195.5,447.9 194.5,458.4 193.5,468.4 192.5,478.0 191.5,487.1 190.5,495.6 189.5,503.6 188.5,510.9 187.5,517.6 186.5,523.6 185.5,528.9 184.5,533.5 183.5,537.4 182.5,540.4 181.5,542.7 180.5,544.3 179.5,545.0 178.5,544.9 177.5,544.1 176.5,542.4 175.5,540.0 174.5,536.8 173.5,532.9 172.5,528.2 171.5,522.8 170.5,516.6 169.5,509.8 168.5,502.4 167.5,494.4 166.5,485.8 165.5,476.6 164.5,466.9 163.5,456.8 162.5,446.3 161.5,435.4 160.5,424.2 159.5,412.7 158.5,401.0 157.5,389.1 156.5,377.1 155.5,365.0 154.5,352.9 153.5,340.9 152.5,328.9 151.5,317.1 150.5,305.4 149.5,294.0 148.5,282.9 147.5,272.1 146.5,261.7 145.5,251.7 144.5,242.2 143.5,233.2 142.5,224.8 141.5,216.9 140.5,209.6 139.5,203.1 138.5,197.1 137.5,191.9 136.5,187.5 135.5,183.7 134.5,180.8 133.5,178.6 132.5,177.2 131.5,176.6 130.5,176.7 129.5,177.7 128.5,179.5 127.5,182.0 126.5,185.3 125.5,189.4 124.5,194.2 123.5,199.7 122.5,205.9 121.5,212.8 120.5,220.4 119.5,228.5 118.5,237.2 117.5,246.4 116.5,256.1 115.5,266.3 114.5,276.9 113.5,287.8 112.5,299.1 111.5,310.6 110.5,322.4 109.5,334.3 108.5,346.3 107.5,358.4 106.5,370.5 105.5,382.5 104.5,394.5 103.5,406.3 102.5,417.9 101.5,429.3 100.5,440.4 99.5,451.1 98.5,461.4 97.5,471.4 96.5,480.8 95.5,489.7 94.5,498.1 93.5,505.8 92.5,513.0 91.5,519.5 90.5,525.3 89.5,530.4 88.5,534.7 87.5,538.4 86.5,541.2 85.5,543.3 84.5,544.6 83.5,545.1 82.5,544.8 81.5,543.7 80.5,541.8 79.5,539.1 78.5,535.7 77.5,531.5 76.5,526.6 75.5,521.0 74.5,514.7 73.5,507.7 72.5,500.1 71.5,491.8 70.5,483.1 69.5,473.8 68.5,464.0 67.5,453.7 66.5,443.1 65.5,432.1 64.5,420.8 63.5,409.2 62.5,397.5 61.5,385.5 60.5,373.5 59.5,361.4 58.5,349.3 57.5,337.3 56.5,325.3 55.5,313.5 54.5,302.0 53.5,290.6 52.5,279.6 51.5,268.9 50.5,258.6 49.5,248.8 48.5,239.4 47.5,230.6 46.5,222.3 45.5,214.7 44.5,207.6 43.5,201.2 42.5,195.5" fill="#073234" stroke="#073234" stroke-width="1"/><polygon clip-path="url(#pl)" points="42.5,185.9 43.5,191.9 44.5,198.7 45.5,206.1 46.5,214.3 47.5,223.0 48.5,232.4 49.5,242.3 50.5,252.7 51.5,263.6 52.5,274.9 53.5,286.5 54.5,298.5 55.5,310.8 56.5,323.3 57.5,335.9 58.5,348.6 59.5,361.4 60.5,374.2 61.5,387.0 62.5,399.6 63.5,412.0 64.5,424.3 65.5,436.2 66.5,447.9 67.5,459.1 68.5,470.0 69.5,480.3 70.5,490.2 71.5,499.5 72.5,508.2 73.5,516.2 74.5,523.6 75.5,530.3 76.5,536.3 77.5,541.5 78.5,545.9 79.5,549.5 80.5,552.3 81.5,554.3 82.5,555.5 83.5,555.8 84.5,555.3 85.5,553.9 86.5,551.7 87.5,548.7 88.5,544.9 89.5,540.2 90.5,534.9 91.5,528.7 92.5,521.8 93.5,514.3 94.5,506.1 95.5,497.2 96.5,487.8 97.5,477.8 98.5,467.3 99.5,456.4 100.5,445.0 101.5,433.3 102.5,421.2 103.5,408.9 104.5,396.4 105.5,383.8 106.5,371.0 107.5,358.2 108.5,345.5 109.5,332.7 110.5,320.1 111.5,307.7 112.5,295.5 113.5,283.6 114.5,272.0 115.5,260.8 116.5,250.0 117.5,239.8 118.5,230.0 119.5,220.8 120.5,212.2 121.5,204.2 122.5,196.9 123.5,190.3 124.5,184.5 125.5,179.4 126.5,175.1 127.5,171.6 128.5,168.9 129.5,167.0 130.5,166.0 131.5,165.8 132.5,166.5 133.5,168.0 134.5,170.3 135.5,173.4 136.5,177.4 137.5,182.1 138.5,187.6 139.5,193.9 140.5,200.9 141.5,208.5 142.5,216.8 143.5,225.8 144.5,235.3 145.5,245.4 146.5,255.9 147.5,266.9 148.5,278.3 149.5,290.1 150.5,302.2 151.5,314.5 152.5,327.0 153.5,339.7 154.5,352.5 155.5,365.3 156.5,378.1 157.5,390.8 158.5,403.3 159.5,415.7 160.5,427.9 161.5,439.8 162.5,451.3 163.5,462.4 164.5,473.1 165.5,483.3 166.5,493.0 167.5,502.1 168.5,510.7 169.5,518.5 170.5,525.7 171.5,532.2 172.5,537.9 173.5,542.9 174.5,547.1 175.5,550.5 176.5,553.0 177.5,554.8 178.5,555.7 179.5,555.7 180.5,554.9 181.5,553.3 182.5,550.9 183.5,547.6 184.5,543.6 185.5,538.7 186.5,533.1 187.5,526.7 188.5,519.6 189.5,511.9 190.5,503.5 191.5,494.4 192.5,484.8 193.5,474.7 194.5,464.1 195.5,453.0 196.5,441.5 197.5,429.7 198.5,417.6 199.5,405.2 200.5,392.7 201.5,380.0 202.5,367.2 203.5,354.4 204.5,341.6 205.5,328.9 206.5,316.4 207.5,304.0 208.5,291.9 209.5,280.1 210.5,268.6 211.5,257.5 212.5,246.9 213.5,236.8 214.5,227.2 215.5,218.1 216.5,209.7 217.5,202.0 218.5,194.9 219.5,188.5 220.5,182.9 221.5,178.0 222.5,174.0 223.5,170.7 224.5,168.3 225.5,166.7 226.5,165.9 227.5,165.9 228.5,166.8 229.5,168.6 230.5,171.1 231.5,174.5 232.5,178.7 233.5,183.7 234.5,189.4 235.5,195.9 236.5,203.1 237.5,210.9 238.5,219.5 239.5,228.6 240.5,238.3 241.5,248.5 242.5,259.2 243.5,270.3 244.5,281.8 245.5,293.7 246.5,305.9 247.5,318.3 248.5,330.8 249.5,343.5 250.5,356.3 251.5,369.1 252.5,381.9 253.5,394.6 254.5,407.1 255.5,419.4 256.5,431.5 257.5,443.3 258.5,454.7 259.5,465.7 260.5,476.2 261.5,486.3 262.5,495.8 263.5,504.8 264.5,513.1 265.5,520.7 266.5,527.7 267.5,534.0 268.5,539.5 269.5,544.2 270.5,548.2 271.5,551.3 272.5,553.6 273.5,555.1 274.5,555.8 275.5,555.6 276.5,554.6 277.5,552.7 278.5,550.0 279.5,546.5 280.5,542.2 281.5,537.1 282.5,531.3 283.5,524.7 284.5,517.4 285.5,509.4 286.5,500.8 287.5,491.6 288.5,481.8 289.5,471.6 290.5,460.8 291.5,449.6 292.5,438.0 293.5,426.1 294.5,413.9 295.5,401.5 296.5,388.9 297.5,376.1 298.5,363.4 299.5,350.6 300.5,337.8 301.5,325.2 302.5,312.7 303.5,300.4 304.5,288.3 305.5,276.6 306.5,265.2 307.5,254.3 308.5,243.8 309.5,233.8 310.5,224.4 311.5,215.5 312.5,207.3 313.5,199.8 314.5,192.9 315.5,186.7 316.5,181.4 317.5,176.7 318.5,172.9 319.5,169.9 320.5,167.7 321.5,166.3 322.5,165.8 323.5,166.1 324.5,167.3 325.5,169.3 326.5,172.1 327.5,175.7 328.5,180.1 329.5,185.3 330.5,191.3 331.5,198.0 332.5,205.4 333.5,213.4 334.5,222.1 335.5,231.4 336.5,241.3 337.5,251.6 338.5,262.5 339.5,273.7 340.5,285.4 341.5,297.3 342.5,309.6 343.5,322.0 344.5,334.6 345.5,347.4 346.5,360.2 347.5,373.0 348.5,385.7 349.5,398.3 350.5,410.8 351.5,423.1 352.5,435.1 353.5,446.7 354.5,458.0 355.5,468.9 356.5,479.3 357.5,489.2 358.5,498.6 359.5,507.3 360.5,515.5 361.5,522.9 362.5,529.7 363.5,535.7 364.5,541.0 365.5,545.5 366.5,549.2 367.5,552.1 368.5,554.2 369.5,555.4 370.5,555.8 371.5,555.4 372.5,554.1 373.5,552.0 374.5,549.0 375.5,545.3 376.5,540.7 377.5,535.4 378.5,529.4 379.5,522.6 380.5,515.1 381.5,506.9 382.5,498.1 383.5,488.7 384.5,478.8 385.5,468.4 386.5,457.5 387.5,446.1 388.5,434.5 389.5,422.5 390.5,410.2 391.5,397.7 392.5,385.1 393.5,372.3 394.5,359.5 395.5,346.7 396.5,334.0 397.5,321.4 398.5,308.9 399.5,296.7 400.5,284.8 401.5,273.2 402.5,261.9 403.5,251.1 404.5,240.8 405.5,230.9 406.5,221.7 407.5,213.0 408.5,205.0 409.5,197.6 410.5,191.0 411.5,185.1 412.5,179.9 413.5,175.5 414.5,171.9 415.5,169.1 416.5,167.2 417.5,166.1 418.5,165.8 419.5,166.4 420.5,167.8 421.5,170.0 422.5,173.1 423.5,176.9 424.5,181.6 425.5,187.0 426.5,193.2 427.5,200.1 428.5,207.7 429.5,216.0 430.5,224.9 431.5,234.3 432.5,244.3 433.5,254.8 434.5,265.8 435.5,277.2 436.5,288.9 437.5,301.0 438.5,313.3 439.5,325.8 440.5,338.4 441.5,351.2 442.5,364.0 443.5,376.8 444.5,389.5 445.5,402.1 446.5,414.5 447.5,426.7 448.5,438.6 449.5,450.2 450.5,461.3 451.5,472.1 452.5,482.3 453.5,492.1 454.5,501.3 455.5,509.8 456.5,517.8 457.5,525.0 458.5,531.6 459.5,537.4 460.5,542.4 461.5,546.7 462.5,550.2 463.5,552.8 464.5,554.6 465.5,555.6 466.5,555.8 467.5,555.1 468.5,553.5 469.5,551.2 470.5,548.0 471.5,544.0 472.5,539.2 473.5,533.7 474.5,527.4 475.5,520.4 476.5,512.7 477.5,504.3 478.5,495.4 479.5,485.8 480.5,475.7 481.5,465.1 482.5,454.1 483.5,442.7 484.5,430.9 485.5,418.8 486.5,406.5 487.5,393.9 488.5,381.2 489.5,368.5 490.5,355.7 491.5,342.9 492.5,330.2 493.5,317.6 494.5,305.2 495.5,293.1 496.5,281.3 497.5,269.7 498.5,258.6 499.5,247.9 500.5,237.8 501.5,228.1 502.5,219.0 503.5,210.5 504.5,202.7 505.5,195.6 506.5,189.1 507.5,183.4 508.5,178.5 509.5,174.3 510.5,171.0 511.5,168.5 512.5,166.8 513.5,165.9 514.5,165.9 515.5,166.7 516.5,168.4 517.5,170.9 518.5,174.2 519.5,178.3 520.5,183.2 521.5,188.8 522.5,195.2 523.5,202.3 524.5,210.1 525.5,218.6 526.5,227.6 527.5,237.3 528.5,247.4 529.5,258.1 530.5,269.2 531.5,280.7 532.5,292.5 533.5,304.6 534.5,317.0 535.5,329.6 536.5,342.3 537.5,355.0 538.5,367.8 539.5,380.6 540.5,393.3 541.5,405.8 542.5,418.2 543.5,430.3 544.5,442.1 545.5,453.6 546.5,464.6 547.5,475.2 548.5,485.3 549.5,494.9 550.5,503.9 551.5,512.3 552.5,520.0 553.5,527.1 554.5,533.4 555.5,539.0 556.5,543.8 557.5,547.8 558.5,551.0 559.5,553.4 560.5,555.0 561.5,555.7 562.5,555.6 563.5,554.7 564.5,552.9 565.5,550.3 566.5,546.9 567.5,542.7 568.5,537.6 569.5,531.9 570.5,525.4 571.5,518.1 572.5,510.2 573.5,501.7 574.5,492.6 575.5,482.8 576.5,472.6 577.5,461.9 578.5,450.7 579.5,439.2 580.5,427.3 581.5,415.1 582.5,402.7 583.5,390.1 584.5,377.4 585.5,364.6 586.5,351.8 587.5,339.1 588.5,326.4 589.5,313.9 590.5,301.6 591.5,289.5 592.5,277.8 593.5,266.4 594.5,255.4 595.5,244.8 596.5,234.8 597.5,225.3 598.5,216.4 599.5,208.1 600.5,200.5 601.5,193.5 602.5,187.3 603.5,181.9 604.5,177.2 605.5,173.3 606.5,170.2 607.5,167.9 608.5,166.4 609.5,165.8 610.5,166.1 611.5,167.1 612.5,169.0 613.5,171.8 614.5,175.3 615.5,179.6 616.5,184.8 617.5,190.7 618.5,197.3 619.5,204.6 620.5,212.6 621.5,221.2 622.5,230.5 623.5,240.3 624.5,250.6 625.5,261.4 626.5,272.6 627.5,284.2 628.5,296.1 629.5,308.3 630.5,320.8 631.5,333.4 632.5,346.1 633.5,358.9 634.5,371.7 635.5,384.4 636.5,397.1 637.5,409.6 638.5,421.8 639.5,433.9 640.5,445.6 641.5,456.9 642.5,467.8 643.5,478.3 644.5,488.3 645.5,497.7 646.5,506.5 647.5,514.7 648.5,522.2 649.5,529.0 650.5,535.1 651.5,540.5 652.5,545.1 653.5,548.9 654.5,551.8 655.5,554.0 656.5,555.3 657.5,555.8 658.5,555.4 659.5,554.2 660.5,552.2 661.5,549.4 662.5,545.7 663.5,541.2 664.5,536.0 665.5,530.0 666.5,523.3 667.5,515.8 668.5,507.8 669.5,499.0 670.5,489.7 671.5,479.8 672.5,469.4 673.5,458.6 674.5,447.3 675.5,435.6 676.5,423.7 677.5,411.4 678.5,399.0 679.5,386.3 680.5,373.6 681.5,360.8 682.5,348.0 683.5,335.3 684.5,322.6 685.5,310.2 686.5,297.9 687.5,286.0 688.5,274.3 689.5,263.0 690.5,252.2 691.5,241.8 692.5,231.9 693.5,222.6 694.5,213.8 695.5,205.8 696.5,198.3 697.5,191.6 698.5,185.6 699.5,180.4 700.5,175.9 701.5,172.2 702.5,169.4 703.5,167.4 704.5,166.2 705.5,165.8 706.5,166.3 707.5,167.6 708.5,169.8 709.5,172.7 710.5,176.5 711.5,181.1 712.5,186.5 713.5,192.6 714.5,199.4 715.5,206.9 716.5,215.1 717.5,223.9 718.5,233.3 719.5,243.3 720.5,253.8 721.5,264.7 722.5,276.0 723.5,287.7 724.5,299.8 725.5,312.0 726.5,324.5 727.5,337.2 728.5,349.9 729.5,362.7 730.5,375.5 731.5,388.2 732.5,400.8 733.5,413.3 734.5,425.5 735.5,437.4 736.5,449.0 737.5,460.2 738.5,471.0 739.5,481.3 740.5,491.1 741.5,500.4 742.5,509.0 743.5,517.0 744.5,524.3 745.5,530.9 746.5,536.8 747.5,542.0 748.5,546.3 749.5,549.8 750.5,552.6 751.5,554.5 752.5,555.5 753.5,555.8 754.5,555.2 755.5,553.7 756.5,551.4 757.5,548.3 758.5,544.4 759.5,539.7 759.5,529.9 758.5,534.3 757.5,538.0 756.5,541.0 755.5,543.1 754.5,544.5 753.5,545.1 752.5,544.8 751.5,543.8 750.5,542.0 749.5,539.4 748.5,536.1 747.5,532.0 746.5,527.1 745.5,521.6 744.5,515.3 743.5,508.4 742.5,500.9 741.5,492.7 740.5,484.0 739.5,474.7 738.5,465.0 737.5,454.8 736.5,444.2 735.5,433.2 734.5,421.9 733.5,410.4 732.5,398.6 731.5,386.7 730.5,374.7 729.5,362.6 728.5,350.5 727.5,338.5 726.5,326.5 725.5,314.7 724.5,303.1 723.5,291.8 722.5,280.7 721.5,270.0 720.5,259.7 719.5,249.8 718.5,240.4 717.5,231.5 716.5,223.1 715.5,215.4 714.5,208.3 713.5,201.8 712.5,196.1 711.5,191.0 710.5,186.7 709.5,183.1 708.5,180.3 707.5,178.2 706.5,177.0 705.5,176.5 704.5,176.9 703.5,178.0 702.5,179.9 701.5,182.6 700.5,186.1 699.5,190.3 698.5,195.2 697.5,200.9 696.5,207.3 695.5,214.3 694.5,221.9 693.5,230.2 692.5,239.0 691.5,248.3 690.5,258.1 689.5,268.4 688.5,279.1 687.5,290.1 686.5,301.4 685.5,313.0 684.5,324.7 683.5,336.7 682.5,348.7 681.5,360.8 680.5,372.9 679.5,384.9 678.5,396.9 677.5,408.6 676.5,420.2 675.5,431.5 674.5,442.5 673.5,453.2 672.5,463.5 671.5,473.3 670.5,482.6 669.5,491.4 668.5,499.7 667.5,507.3 666.5,514.3 665.5,520.7 664.5,526.4 663.5,531.3 662.5,535.5 661.5,539.0 660.5,541.7 659.5,543.6 658.5,544.7 657.5,545.1 656.5,544.6 655.5,543.4 654.5,541.3 653.5,538.5 652.5,534.9 651.5,530.6 650.5,525.5 649.5,519.8 648.5,513.3 647.5,506.2 646.5,498.5 645.5,490.1 644.5,481.2 643.5,471.8 642.5,461.9 641.5,451.6 640.5,440.9 639.5,429.8 638.5,418.5 637.5,406.9 636.5,395.1 635.5,383.1 634.5,371.1 633.5,359.0 632.5,346.9 631.5,334.9 630.5,323.0 629.5,311.2 628.5,299.7 627.5,288.4 626.5,277.4 625.5,266.8 624.5,256.6 623.5,246.9 622.5,237.6 621.5,228.9 620.5,220.7 619.5,213.2 618.5,206.3 617.5,200.0 616.5,194.5 615.5,189.6 614.5,185.5 613.5,182.2 612.5,179.6 611.5,177.8 610.5,176.8 609.5,176.5 608.5,177.1 607.5,178.5 606.5,180.6 605.5,183.6 604.5,187.3 603.5,191.7 602.5,196.9 601.5,202.7 600.5,209.3 599.5,216.5 598.5,224.3 597.5,232.8 596.5,241.7 595.5,251.2 594.5,261.2 593.5,271.6 592.5,282.3 591.5,293.4 590.5,304.8 589.5,316.5 588.5,328.3 587.5,340.3 586.5,352.3 585.5,364.4 584.5,376.5 583.5,388.5 582.5,400.4 581.5,412.1 580.5,423.6 579.5,434.9 578.5,445.8 577.5,456.3 576.5,466.5 575.5,476.1 574.5,485.3 573.5,494.0 572.5,502.0 571.5,509.5 570.5,516.3 569.5,522.5 568.5,527.9 567.5,532.7 566.5,536.6 565.5,539.9 564.5,542.3 563.5,544.0 562.5,544.9 561.5,545.0 560.5,544.3 559.5,542.8 558.5,540.6 557.5,537.5 556.5,533.7 555.5,529.2 554.5,523.9 553.5,517.9 552.5,511.3 551.5,504.0 550.5,496.0 549.5,487.5 548.5,478.5 547.5,468.9 546.5,458.9 545.5,448.4 544.5,437.6 543.5,426.5 542.5,415.0 541.5,403.4 540.5,391.5 539.5,379.5 538.5,367.5 537.5,355.4 536.5,343.3 535.5,331.3 534.5,319.4 533.5,307.7 532.5,296.3 531.5,285.1 530.5,274.2 529.5,263.7 528.5,253.7 527.5,244.1 526.5,235.0 525.5,226.4 524.5,218.4 523.5,211.0 522.5,204.3 521.5,198.3 520.5,192.9 519.5,188.3 518.5,184.4 517.5,181.3 516.5,179.0 515.5,177.4 514.5,176.6 513.5,176.6 512.5,177.4 511.5,179.1 510.5,181.4 509.5,184.6 508.5,188.5 507.5,193.2 506.5,198.6 505.5,204.6 504.5,211.4 503.5,218.8 502.5,226.8 501.5,235.4 500.5,244.5 499.5,254.2 498.5,264.2 497.5,274.8 496.5,285.6 495.5,296.8 494.5,308.3 493.5,320.0 492.5,331.9 491.5,343.9 490.5,356.0 489.5,368.1 488.5,380.1 487.5,392.1 486.5,404.0 485.5,415.6 484.5,427.0 483.5,438.2 482.5,449.0 481.5,459.4 480.5,469.4 479.5,478.9 478.5,488.0 477.5,496.4 476.5,504.3 475.5,511.6 474.5,518.2 473.5,524.2 472.5,529.4 471.5,533.9 470.5,537.7 469.5,540.7 468.5,542.9 467.5,544.4 466.5,545.0 465.5,544.9 464.5,544.0 463.5,542.2 462.5,539.7 461.5,536.5 460.5,532.4 459.5,527.7 458.5,522.2 457.5,516.0 456.5,509.1 455.5,501.6 454.5,493.5 453.5,484.9 452.5,475.7 451.5,466.0 450.5,455.8 449.5,445.2 448.5,434.3 447.5,423.1 446.5,411.6 445.5,399.8 444.5,387.9 443.5,375.9 442.5,363.8 441.5,351.7 440.5,339.7 439.5,327.7 438.5,315.9 437.5,304.3 436.5,292.9 435.5,281.8 434.5,271.0 433.5,260.7 432.5,250.7 431.5,241.3 430.5,232.3 429.5,223.9 428.5,216.1 427.5,209.0 426.5,202.4 425.5,196.6 424.5,191.5 423.5,187.1 422.5,183.4 421.5,180.5 420.5,178.4 419.5,177.1 418.5,176.5 417.5,176.8 416.5,177.8 415.5,179.7 414.5,182.3 413.5,185.7 412.5,189.8 411.5,194.7 410.5,200.3 409.5,206.6 408.5,213.6 407.5,221.1 406.5,229.3 405.5,238.1 404.5,247.4 403.5,257.1 402.5,267.4 401.5,278.0 400.5,289.0 399.5,300.2 398.5,311.8 397.5,323.6 396.5,335.5 395.5,347.5 394.5,359.6 393.5,371.7 392.5,383.7 391.5,395.7 390.5,407.5 389.5,419.1 388.5,430.4 387.5,441.5 386.5,452.2 385.5,462.5 384.5,472.3 383.5,481.7 382.5,490.6 381.5,498.9 380.5,506.6 379.5,513.7 378.5,520.1 377.5,525.8 376.5,530.8 375.5,535.1 374.5,538.7 373.5,541.5 372.5,543.4 371.5,544.7 370.5,545.1 369.5,544.7 368.5,543.5 367.5,541.6 366.5,538.8 365.5,535.3 364.5,531.1 363.5,526.1 362.5,520.4 361.5,514.0 360.5,506.9 359.5,499.3 358.5,491.0 357.5,482.2 356.5,472.8 355.5,463.0 354.5,452.7 353.5,442.0 352.5,431.0 351.5,419.6 350.5,408.1 349.5,396.3 348.5,384.3 347.5,372.3 346.5,360.2 345.5,348.1 344.5,336.1 343.5,324.1 342.5,312.4 341.5,300.8 340.5,289.5 339.5,278.5 338.5,267.9 337.5,257.6 336.5,247.8 335.5,238.5 334.5,229.8 333.5,221.5 332.5,213.9 331.5,206.9 330.5,200.6 329.5,195.0 328.5,190.1 327.5,185.9 326.5,182.5 325.5,179.8 324.5,177.9 323.5,176.8 322.5,176.5 321.5,177.0 320.5,178.3 319.5,180.4 318.5,183.2 317.5,186.9 316.5,191.2 315.5,196.3 314.5,202.1 313.5,208.6 312.5,215.8 311.5,223.5 310.5,231.9 309.5,240.8 308.5,250.2 307.5,260.2 306.5,270.5 305.5,281.2 304.5,292.3 303.5,303.7 302.5,315.3 301.5,327.1 300.5,339.1 299.5,351.1 298.5,363.2 297.5,375.3 296.5,387.3 295.5,399.2 294.5,411.0 293.5,422.5 292.5,433.8 291.5,444.7 290.5,455.3 289.5,465.5 288.5,475.2 287.5,484.4 286.5,493.1 285.5,501.2 284.5,508.8 283.5,515.7 282.5,521.9 281.5,527.4 280.5,532.2 279.5,536.3 278.5,539.6 277.5,542.1 276.5,543.9 275.5,544.9 274.5,545.0 273.5,544.4 272.5,543.0 271.5,540.8 270.5,537.9 269.5,534.1 268.5,529.7 267.5,524.5 266.5,518.5 265.5,512.0 264.5,504.7 263.5,496.8 262.5,488.4 261.5,479.4 260.5,469.9 259.5,459.9 258.5,449.5 257.5,438.7 256.5,427.6 255.5,416.2 254.5,404.5 253.5,392.7 252.5,380.7 251.5,368.7 250.5,356.6 249.5,344.5 248.5,332.5 247.5,320.6 246.5,308.9 245.5,297.4 244.5,286.2 243.5,275.3 242.5,264.8 241.5,254.7 240.5,245.0 239.5,235.8 238.5,227.2 237.5,219.2 236.5,211.8 235.5,205.0 234.5,198.8 233.5,193.4 232.5,188.7 231.5,184.8 230.5,181.6 229.5,179.2 228.5,177.5 227.5,176.7 226.5,176.6 225.5,177.3 224.5,178.9 223.5,181.2 222.5,184.2 221.5,188.1 220.5,192.7 219.5,198.0 218.5,204.0 217.5,210.7 216.5,218.0 215.5,226.0 214.5,234.5 213.5,243.6 212.5,253.2 211.5,263.2 210.5,273.7 209.5,284.5 208.5,295.7 207.5,307.1 206.5,318.8 205.5,330.7 204.5,342.7 203.5,354.8 202.5,366.8 201.5,378.9 200.5,390.9 199.5,402.8 198.5,414.5 197.5,425.9 196.5,437.1 195.5,447.9 194.5,458.4 193.5,468.4 192.5,478.0 191.5,487.1 190.5,495.6 189.5,503.6 188.5,510.9 187.5,517.6 186.5,523.6 185.5,528.9 184.5,533.5 183.5,537.4 182.5,540.4 181.5,542.7 180.5,544.3 179.5,545.0 178.5,544.9 177.5,544.1 176.5,542.4 175.5,540.0 174.5,536.8 173.5,532.9 172.5,528.2 171.5,522.8 170.5,516.6 169.5,509.8 168.5,502.4 167.5,494.4 166.5,485.8 165.5,476.6 164.5,466.9 163.5,456.8 162.5,446.3 161.5,435.4 160.5,424.2 159.5,412.7 158.5,401.0 157.5,389.1 156.5,377.1 155.5,365.0 154.5,352.9 153.5,340.9 152.5,328.9 151.5,317.1 150.5,305.4 149.5,294.0 148.5,282.9 147.5,272.1 146.5,261.7 145.5,251.7 144.5,242.2 143.5,233.2 142.5,224.8 141.5,216.9 140.5,209.6 139.5,203.1 138.5,197.1 137.5,191.9 136.5,187.5 135.5,183.7 134.5,180.8 133.5,178.6 132.5,177.2 131.5,176.6 130.5,176.7 129.5,177.7 128.5,179.5 127.5,182.0 126.5,185.3 125.5,189.4 124.5,194.2 123.5,199.7 122.5,205.9 121.5,212.8 120.5,220.4 119.5,228.5 118.5,237.2 117.5,246.4 116.5,256.1 115.5,266.3 114.5,276.9 113.5,287.8 112.5,299.1 111.5,310.6 110.5,322.4 109.5,334.3 108.5,346.3 107.5,358.4 106.5,370.5 105.5,382.5 104.5,394.5 103.5,406.3 102.5,417.9 101.5,429.3 100.5,440.4 99.5,451.1 98.5,461.4 97.5,471.4 96.5,480.8 95.5,489.7 94.5,498.1 93.5,505.8 92.5,513.0 91.5,519.5 90.5,525.3 89.5,530.4 88.5,534.7 87.5,538.4 86.5,541.2 85.5,543.3 84.5,544.6 83.5,545.1 82.5,544.8 81.5,543.7 80.5,541.8 79.5,539.1 78.5,535.7 77.5,531.5 76.5,526.6 75.5,521.0 74.5,514.7 73.5,507.7 72.5,500.1 71.5,491.8 70.5,483.1 69.5,473.8 68.5,464.0 67.5,453.7 66.5,443.1 65.5,432.1 64.5,420.8 63.5,409.2 62.5,397.5 61.5,385.5 60.5,373.5 59.5,361.4 58.5,349.3 57.5,337.3 56.5,325.3 55.5,313.5 54.5,302.0 53.5,290.6 52.5,279.6 51.5,268.9 50.5,258.6 49.5,248.8 48.5,239.4 47.5,230.6 46.5,222.3 45.5,214.7 44.5,207.6 43.5,201.2 42.5,195.5" fill="#094547" stroke="#094547" stroke-width="1"/><polyline points="42.5,185.9 43.5,191.9 44.5,198.7 45.5,206.1 46.5,214.3 47.5,223.0 48.5,232.4 49.5,242.3 50.5,252.7 51.5,263.6 52.5,274.9 53.5,286.5 54.5,298.5 55.5,310.8 56.5,323.3 57.5,335.9 58.5,348.6 59.5,361.4 60.5,374.2 61.5,387.0 62.5,399.6 63.5,412.0 64.5,424.3 65.5,436.2 66.5,447.9 67.5,459.1 68.5,470.0 69.5,480.3 70.5,490.2 71.5,499.5 72.5,508.2 73.5,516.2 74.5,523.6 75.5,530.3 76.5,536.3 77.5,541.5 78.5,545.9 79.5,549.5 80.5,552.3 81.5,554.3 82.5,555.5 83.5,555.8 84.5,555.3 85.5,553.9 86.5,551.7 87.5,548.7 88.5,544.9 89.5,540.2 90.5,534.9 91.5,528.7 92.5,521.8 93.5,514.3 94.5,506.1 95.5,497.2 96.5,487.8 97.5,477.8 98.5,467.3 99.5,456.4 100.5,445.0 101.5,433.3 102.5,421.2 103.5,408.9 104.5,396.4 105.5,383.8 106.5,371.0 107.5,358.2 108.5,345.5 109.5,332.7 110.5,320.1 111.5,307.7 112.5,295.5 113.5,283.6 114.5,272.0 115.5,260.8 116.5,250.0 117.5,239.8 118.5,230.0 119.5,220.8 120.5,212.2 121.5,204.2 122.5,196.9 123.5,190.3 124.5,184.5 125.5,179.4 126.5,175.1 127.5,171.6 128.5,168.9 129.5,167.0 130.5,166.0 131.5,165.8 132.5,166.5 133.5,168.0 134.5,170.3 135.5,173.4 136.5,177.4 137.5,182.1 138.5,187.6 139.5,193.9 140.5,200.9 141.5,208.5 142.5,216.8 143.5,225.8 144.5,235.3 145.5,245.4 146.5,255.9 147.5,266.9 148.5,278.3 149.5,290.1 150.5,302.2 151.5,314.5 152.5,327.0 153.5,339.7 154.5,352.5 155.5,365.3 156.5,378.1 157.5,390.8 158.5,403.3 159.5,415.7 160.5,427.9 161.5,439.8 162.5,451.3 163.5,462.4 164.5,473.1 165.5,483.3 166.5,493.0 167.5,502.1 168.5,510.7 169.5,518.5 170.5,525.7 171.5,532.2 172.5,537.9 173.5,542.9 174.5,547.1 175.5,550.5 176.5,553.0 177.5,554.8 178.5,555.7 179.5,555.7 180.5,554.9 181.5,553.3 182.5,550.9 183.5,547.6 184.5,543.6 185.5,538.7 186.5,533.1 187.5,526.7 188.5,519.6 189.5,511.9 190.5,503.5 191.5,494.4 192.5,484.8 193.5,474.7 194.5,464.1 195.5,453.0 196.5,441.5 197.5,429.7 198.5,417.6 199.5,405.2 200.5,392.7 201.5,380.0 202.5,367.2 203.5,354.4 204.5,341.6 205.5,328.9 206.5,316.4 207.5,304.0 208.5,291.9 209.5,280.1 210.5,268.6 211.5,257.5 212.5,246.9 213.5,236.8 214.5,227.2 215.5,218.1 216.5,209.7 217.5,202.0 218.5,194.9 219.5,188.5 220.5,182.9 221.5,178.0 222.5,174.0 223.5,170.7 224.5,168.3 225.5,166.7 226.5,165.9 227.5,165.9 228.5,166.8 229.5,168.6 230.5,171.1 231.5,174.5 232.5,178.7 233.5,183.7 234.5,189.4 235.5,195.9 236.5,203.1 237.5,210.9 238.5,219.5 239.5,228.6 240.5,238.3 241.5,248.5 242.5,259.2 243.5,270.3 244.5,281.8 245.5,293.7 246.5,305.9 247.5,318.3 248.5,330.8 249.5,343.5 250.5,356.3 251.5,369.1 252.5,381.9 253.5,394.6 254.5,407.1 255.5,419.4 256.5,431.5 257.5,443.3 258.5,454.7 259.5,465.7 260.5,476.2 261.5,486.3 262.5,495.8 263.5,504.8 264.5,513.1 265.5,520.7 266.5,527.7 267.5,534.0 268.5,539.5 269.5,544.2 270.5,548.2 271.5,551.3 272.5,553.6 273.5,555.1 274.5,555.8 275.5,555.6 276.5,554.6 277.5,552.7 278.5,550.0 279.5,546.5 280.5,542.2 281.5,537.1 282.5,531.3 283.5,524.7 284.5,517.4 285.5,509.4 286.5,500.8 287.5,491.6 288.5,481.8 289.5,471.6 290.5,460.8 291.5,449.6 292.5,438.0 293.5,426.1 294.5,413.9 295.5,401.5 296.5,388.9 297.5,376.1 298.5,363.4 299.5,350.6 300.5,337.8 301.5,325.2 302.5,312.7 303.5,300.4 304.5,288.3 305.5,276.6 306.5,265.2 307.5,254.3 308.5,243.8 309.5,233.8 310.5,224.4 311.5,215.5 312.5,207.3 313.5,199.8 314.5,192.9 315.5,186.7 316.5,181.4 317.5,176.7 318.5,172.9 319.5,169.9 320.5,167.7 321.5,166.3 322.5,165.8 323.5,166.1 324.5,167.3 325.5,169.3 326.5,172.1 327.5,175.7 328.5,180.1 329.5,185.3 330.5,191.3 331.5,198.0 332.5,205.4 333.5,213.4 334.5,222.1 335.5,231.4 336.5,241.3 337.5,251.6 338.5,262.5 339.5,273.7 340.5,285.4 341.5,297.3 342.5,309.6 343.5,322.0 344.5,334.6 345.5,347.4 346.5,360.2 347.5,373.0 348.5,385.7 349.5,398.3 350.5,410.8 351.5,423.1 352.5,435.1 353.5,446.7 354.5,458.0 355.5,468.9 356.5,479.3 357.5,489.2 358.5,498.6 359.5,507.3 360.5,515.5 361.5,522.9 362.5,529.7 363.5,535.7 364.5,541.0 365.5,545.5 366.5,549.2 367.5,552.1 368.5,554.2 369.5,555.4 370.5,555.8 371.5,555.4 372.5,554.1 373.5,552.0 374.5,549.0 375.5,545.3 376.5,540.7 377.5,535.4 378.5,529.4 379.5,522.6 380.5,515.1 381.5,506.9 382.5,498.1 383.5,488.7 384.5,478.8 385.5,468.4 386.5,457.5 387.5,446.1 388.5,434.5 389.5,422.5 390.5,410.2 391.5,397.7 392.5,385.1 393.5,372.3 394.5,359.5 395.5,346.7 396.5,334.0 397.5,321.4 398.5,308.9 399.5,296.7 400.5,284.8 401.5,273.2 402.5,261.9 403.5,251.1 404.5,240.8 405.5,230.9 406.5,221.7 407.5,213.0 408.5,205.0 409.5,197.6 410.5,191.0 411.5,185.1 412.5,179.9 413.5,175.5 414.5,171.9 415.5,169.1 416.5,167.2 417.5,166.1 418.5,165.8 419.5,166.4 420.5,167.8 421.5,170.0 422.5,173.1 423.5,176.9 424.5,181.6 425.5,187.0 426.5,193.2 427.5,200.1 428.5,207.7 429.5,216.0 430.5,224.9 431.5,234.3 432.5,244.3 433.5,254.8 434.5,265.8 435.5,277.2 436.5,288.9 437.5,301.0 438.5,313.3 439.5,325.8 440.5,338.4 441.5,351.2 442.5,364.0 443.5,376.8 444.5,389.5 445.5,402.1 446.5,414.5 447.5,426.7 448.5,438.6 449.5,450.2 450.5,461.3 451.5,472.1 452.5,482.3 453.5,492.1 454.5,501.3 455.5,509.8 456.5,517.8 457.5,525.0 458.5,531.6 459.5,537.4 460.5,542.4 461.5,546.7 462.5,550.2 463.5,552.8 464.5,554.6 465.5,555.6 466.5,555.8 467.5,555.1 468.5,553.5 469.5,551.2 470.5,548.0 471.5,544.0 472.5,539.2 473.5,533.7 474.5,527.4 475.5,520.4 476.5,512.7 477.5,504.3 478.5,495.4 479.5,485.8 480.5,475.7 481.5,465.1 482.5,454.1 483.5,442.7 484.5,430.9 485.5,418.8 486.5,406.5 487.5,393.9 488.5,381.2 489.5,368.5 490.5,355.7 491.5,342.9 492.5,330.2 493.5,317.6 494.5,305.2 495.5,293.1 496.5,281.3 497.5,269.7 498.5,258.6 499.5,247.9 500.5,237.8 501.5,228.1 502.5,219.0 503.5,210.5 504.5,202.7 505.5,195.6 506.5,189.1 507.5,183.4 508.5,178.5 509.5,174.3 510.5,171.0 511.5,168.5 512.5,166.8 513.5,165.9 514.5,165.9 515.5,166.7 516.5,168.4 517.5,170.9 518.5,174.2 519.5,178.3 520.5,183.2 521.5,188.8 522.5,195.2 523.5,202.3 524.5,210.1 525.5,218.6 526.5,227.6 527.5,237.3 528.5,247.4 529.5,258.1 530.5,269.2 531.5,280.7 532.5,292.5 533.5,304.6 534.5,317.0 535.5,329.6 536.5,342.3 537.5,355.0 538.5,367.8 539.5,380.6 540.5,393.3 541.5,405.8 542.5,418.2 543.5,430.3 544.5,442.1 545.5,453.6 546.5,464.6 547.5,475.2 548.5,485.3 549.5,494.9 550.5,503.9 551.5,512.3 552.5,520.0 553.5,527.1 554.5,533.4 555.5,539.0 556.5,543.8 557.5,547.8 558.5,551.0 559.5,553.4 560.5,555.0 561.5,555.7 562.5,555.6 563.5,554.7 564.5,552.9 565.5,550.3 566.5,546.9 567.5,542.7 568.5,537.6 569.5,531.9 570.5,525.4 571.5,518.1 572.5,510.2 573.5,501.7 574.5,492.6 575.5,482.8 576.5,472.6 577.5,461.9 578.5,450.7 579.5,439.2 580.5,427.3 581.5,415.1 582.5,402.7 583.5,390.1 584.5,377.4 585.5,364.6 586.5,351.8 587.5,339.1 588.5,326.4 589.5,313.9 590.5,301.6 591.5,289.5 592.5,277.8 593.5,266.4 594.5,255.4 595.5,244.8 596.5,234.8 597.5,225.3 598.5,216.4 599.5,208.1 600.5,200.5 601.5,193.5 602.5,187.3 603.5,181.9 604.5,177.2 605.5,173.3 606.5,170.2 607.5,167.9 608.5,166.4 609.5,165.8 610.5,166.1 611.5,167.1 612.5,169.0 613.5,171.8 614.5,175.3 615.5,179.6 616.5,184.8 617.5,190.7 618.5,197.3 619.5,204.6 620.5,212.6 621.5,221.2 622.5,230.5 623.5,240.3 624.5,250.6 625.5,261.4 626.5,272.6 627.5,284.2 628.5,296.1 629.5,308.3 630.5,320.8 631.5,333.4 632.5,346.1 633.5,358.9 634.5,371.7 635.5,384.4 636.5,397.1 637.5,409.6 638.5,421.8 639.5,433.9 640.5,445.6 641.5,456.9 642.5,467.8 643.5,478.3 644.5,488.3 645.5,497.7 646.5,506.5 647.5,514.7 648.5,522.2 649.5,529.0 650.5,535.1 651.5,540.5 652.5,545.1 653.5,548.9 654.5,551.8 655.5,554.0 656.5,555.3 657.5,555.8 658.5,555.4 659.5,554.2 660.5,552.2 661.5,549.4 662.5,545.7 663.5,541.2 664.5,536.0 665.5,530.0 666.5,523.3 667.5,515.8 668.5,507.8 669.5,499.0 670.5,489.7 671.5,479.8 672.5,469.4 673.5,458.6 674.5,447.3 675.5,435.6 676.5,423.7 677.5,411.4 678.5,399.0 679.5,386.3 680.5,373.6 681.5,360.8 682.5,348.0 683.5,335.3 684.5,322.6 685.5,310.2 686.5,297.9 687.5,286.0 688.5,274.3 689.5,263.0 690.5,252.2 691.5,241.8 692.5,231.9 693.5,222.6 694.5,213.8 695.5,205.8 696.5,198.3 697.5,191.6 698.5,185.6 699.5,180.4 700.5,175.9 701.5,172.2 702.5,169.4 703.5,167.4 704.5,166.2 705.5,165.8 706.5,166.3 707.5,167.6 708.5,169.8 709.5,172.7 710.5,176.5 711.5,181.1 712.5,186.5 713.5,192.6 714.5,199.4 715.5,206.9 716.5,215.1 717.5,223.9 718.5,233.3 719.5,243.3 720.5,253.8 721.5,264.7 722.5,276.0 723.5,287.7 724.5,299.8 725.5,312.0 726.5,324.5 727.5,337.2 728.5,349.9 729.5,362.7 730.5,375.5 731.5,388.2 732.5,400.8 733.5,413.3 734.5,425.5 735.5,437.4 736.5,449.0 737.5,460.2 738.5,471.0 739.5,481.3 740.5,491.1 741.5,500.4 742.5,509.0 743.5,517.0 744.5,524.3 745.5,530.9 746.5,536.8 747.5,542.0 748.5,546.3 749.5,549.8 750.5,552.6 751.5,554.5 752.5,555.5 753.5,555.8 754.5,555.2 755.5,553.7 756.5,551.4 757.5,548.3 758.5,544.4 759.5,539.7" stroke="#0a4c4e" stroke-width="3.5"/><polyline points="42.5,185.9 43.5,191.9 44.5,198.7 45.5,206.1 46.5,214.3 47.5,223.0 48.5,232.4 49.5,242.3 50.5,252.7 51.5,263.6 52.5,274.9 53.5,286.5 54.5,298.5 55.5,310.8 56.5,323.3 57.5,335.9 58.5,348.6 59.5,361.4 60.5,374.2 61.5,387.0 62.5,399.6 63.5,412.0 64.5,424.3 65.5,436.2 66.5,447.9 67.5,459.1 68.5,470.0 69.5,480.3 70.5,490.2 71.5,499.5 72.5,508.2 73.5,516.2 74.5,523.6 75.5,530.3 76.5,536.3 77.5,541.5 78.5,545.9 79.5,549.5 80.5,552.3 81.5,554.3 82.5,555.5 83.5,555.8 84.5,555.3 85.5,553.9 86.5,551.7 87.5,548.7 88.5,544.9 89.5,540.2 90.5,534.9 91.5,528.7 92.5,521.8 93.5,514.3 94.5,506.1 95.5,497.2 96.5,487.8 97.5,477.8 98.5,467.3 99.5,456.4 100.5,445.0 101.5,433.3 102.5,421.2 103.5,408.9 104.5,396.4 105.5,383.8 106.5,371.0 107.5,358.2 108.5,345.5 109.5,332.7 110.5,320.1 111.5,307.7 112.5,295.5 113.5,283.6 114.5,272.0 115.5,260.8 116.5,250.0 117.5,239.8 118.5,230.0 119.5,220.8 120.5,212.2 121.5,204.2 122.5,196.9 123.5,190.3 124.5,184.5 125.5,179.4 126.5,175.1 127.5,171.6 128.5,168.9 129.5,167.0 130.5,166.0 131.5,165.8 132.5,166.5 133.5,168.0 134.5,170.3 135.5,173.4 136.5,177.4 137.5,182.1 138.5,187.6 139.5,193.9 140.5,200.9 141.5,208.5 142.5,216.8 143.5,225.8 144.5,235.3 145.5,245.4 146.5,255.9 147.5,266.9 148.5,278.3 149.5,290.1 150.5,302.2 151.5,314.5 152.5,327.0 153.5,339.7 154.5,352.5 155.5,365.3 156.5,378.1 157.5,390.8 158.5,403.3 159.5,415.7 160.5,427.9 161.5,439.8 162.5,451.3 163.5,462.4 164.5,473.1 165.5,483.3 166.5,493.0 167.5,502.1 168.5,510.7 169.5,518.5 170.5,525.7 171.5,532.2 172.5,537.9 173.5,542.9 174.5,547.1 175.5,550.5 176.5,553.0 177.5,554.8 178.5,555.7 179.5,555.7 180.5,554.9 181.5,553.3 182.5,550.9 183.5,547.6 184.5,543.6 185.5,538.7 186.5,533.1 187.5,526.7 188.5,519.6 189.5,511.9 190.5,503.5 191.5,494.4 192.5,484.8 193.5,474.7 194.5,464.1 195.5,453.0 196.5,441.5 197.5,429.7 198.5,417.6 199.5,405.2 200.5,392.7 201.5,380.0 202.5,367.2 203.5,354.4 204.5,341.6 205.5,328.9 206.5,316.4 207.5,304.0 208.5,291.9 209.5,280.1 210.5,268.6 211.5,257.5 212.5,246.9 213.5,236.8 214.5,227.2 215.5,218.1 216.5,209.7 217.5,202.0 218.5,194.9 219.5,188.5 220.5,182.9 221.5,178.0 222.5,174.0 223.5,170.7 224.5,168.3 225.5,166.7 226.5,165.9 227.5,165.9 228.5,166.8 229.5,168.6 230.5,171.1 231.5,174.5 232.5,178.7 233.5,183.7 234.5,189.4 235.5,195.9 236.5,203.1 237.5,210.9 238.5,219.5 239.5,228.6 240.5,238.3 241.5,248.5 242.5,259.2 243.5,270.3 244.5,281.8 245.5,293.7 246.5,305.9 247.5,318.3 248.5,330.8 249.5,343.5 250.5,356.3 251.5,369.1 252.5,381.9 253.5,394.6 254.5,407.1 255.5,419.4 256.5,431.5 257.5,443.3 258.5,454.7 259.5,465.7 260.5,476.2 261.5,486.3 262.5,495.8 263.5,504.8 264.5,513.1 265.5,520.7 266.5,527.7 267.5,534.0 268.5,539.5 269.5,544.2 270.5,548.2 271.5,551.3 272.5,553.6 273.5,555.1 274.5,555.8 275.5,555.6 276.5,554.6 277.5,552.7 278.5,550.0 279.5,546.5 280.5,542.2 281.5,537.1 282.5,531.3 283.5,524.7 284.5,517.4 285.5,509.4 286.5,500.8 287.5,491.6 288.5,481.8 289.5,471.6 290.5,460.8 291.5,449.6 292.5,438.0 293.5,426.1 294.5,413.9 295.5,401.5 296.5,388.9 297.5,376.1 298.5,363.4 299.5,350.6 300.5,337.8 301.5,325.2 302.5,312.7 303.5,300.4 304.5,288.3 305.5,276.6 306.5,265.2 307.5,254.3 308.5,243.8 309.5,233.8 310.5,224.4 311.5,215.5 312.5,207.3 313.5,199.8 314.5,192.9 315.5,186.7 316.5,181.4 317.5,176.7 318.5,172.9 319.5,169.9 320.5,167.7 321.5,166.3 322.5,165.8 323.5,166.1 324.5,167.3 325.5,169.3 326.5,172.1 327.5,175.7 328.5,180.1 329.5,185.3 330.5,191.3 331.5,198.0 332.5,205.4 333.5,213.4 334.5,222.1 335.5,231.4 336.5,241.3 337.5,251.6 338.5,262.5 339.5,273.7 340.5,285.4 341.5,297.3 342.5,309.6 343.5,322.0 344.5,334.6 345.5,347.4 346.5,360.2 347.5,373.0 348.5,385.7 349.5,398.3 350.5,410.8 351.5,423.1 352.5,435.1 353.5,446.7 354.5,458.0 355.5,468.9 356.5,479.3 357.5,489.2 358.5,498.6 359.5,507.3 360.5,515.5 361.5,522.9 362.5,529.7 363.5,535.7 364.5,541.0 365.5,545.5 366.5,549.2 367.5,552.1 368.5,554.2 369.5,555.4 370.5,555.8 371.5,555.4 372.5,554.1 373.5,552.0 374.5,549.0 375.5,545.3 376.5,540.7 377.5,535.4 378.5,529.4 379.5,522.6 380.5,515.1 381.5,506.9 382.5,498.1 383.5,488.7 384.5,478.8 385.5,468.4 386.5,457.5 387.5,446.1 388.5,434.5 389.5,422.5 390.5,410.2 391.5,397.7 392.5,385.1 393.5,372.3 394.5,359.5 395.5,346.7 396.5,334.0 397.5,321.4 398.5,308.9 399.5,296.7 400.5,284.8 401.5,273.2 402.5,261.9 403.5,251.1 404.5,240.8 405.5,230.9 406.5,221.7 407.5,213.0 408.5,205.0 409.5,197.6 410.5,191.0 411.5,185.1 412.5,179.9 413.5,175.5 414.5,171.9 415.5,169.1 416.5,167.2 417.5,166.1 418.5,165.8 419.5,166.4 420.5,167.8 421.5,170.0 422.5,173.1 423.5,176.9 424.5,181.6 425.5,187.0 426.5,193.2 427.5,200.1 428.5,207.7 429.5,216.0 430.5,224.9 431.5,234.3 432.5,244.3 433.5,254.8 434.5,265.8 435.5,277.2 436.5,288.9 437.5,301.0 438.5,313.3 439.5,325.8 440.5,338.4 441.5,351.2 442.5,364.0 443.5,376.8 444.5,389.5 445.5,402.1 446.5,414.5 447.5,426.7 448.5,438.6 449.5,450.2 450.5,461.3 451.5,472.1 452.5,482.3 453.5,492.1 454.5,501.3 455.5,509.8 456.5,517.8 457.5,525.0 458.5,531.6 459.5,537.4 460.5,542.4 461.5,546.7 462.5,550.2 463.5,552.8 464.5,554.6 465.5,555.6 466.5,555.8 467.5,555.1 468.5,553.5 469.5,551.2 470.5,548.0 471.5,544.0 472.5,539.2 473.5,533.7 474.5,527.4 475.5,520.4 476.5,512.7 477.5,504.3 478.5,495.4 479.5,485.8 480.5,475.7 481.5,465.1 482.5,454.1 483.5,442.7 484.5,430.9 485.5,418.8 486.5,406.5 487.5,393.9 488.5,381.2 489.5,368.5 490.5,355.7 491.5,342.9 492.5,330.2 493.5,317.6 494.5,305.2 495.5,293.1 496.5,281.3 497.5,269.7 498.5,258.6 499.5,247.9 500.5,237.8 501.5,228.1 502.5,219.0 503.5,210.5 504.5,202.7 505.5,195.6 506.5,189.1 507.5,183.4 508.5,178.5 509.5,174.3 510.5,171.0 511.5,168.5 512.5,166.8 513.5,165.9 514.5,165.9 515.5,166.7 516.5,168.4 517.5,170.9 518.5,174.2 519.5,178.3 520.5,183.2 521.5,188.8 522.5,195.2 523.5,202.3 524.5,210.1 525.5,218.6 526.5,227.6 527.5,237.3 528.5,247.4 529.5,258.1 530.5,269.2 531.5,280.7 532.5,292.5 533.5,304.6 534.5,317.0 535.5,329.6 536.5,342.3 537.5,355.0 538.5,367.8 539.5,380.6 540.5,393.3 541.5,405.8 542.5,418.2 543.5,430.3 544.5,442.1 545.5,453.6 546.5,464.6 547.5,475.2 548.5,485.3 549.5,494.9 550.5,503.9 551.5,512.3 552.5,520.0 553.5,527.1 554.5,533.4 555.5,539.0 556.5,543.8 557.5,547.8 558.5,551.0 559.5,553.4 560.5,555.0 561.5,555.7 562.5,555.6 563.5,554.7 564.5,552.9 565.5,550.3 566.5,546.9 567.5,542.7 568.5,537.6 569.5,531.9 570.5,525.4 571.5,518.1 572.5,510.2 573.5,501.7 574.5,492.6 575.5,482.8 576.5,472.6 577.5,461.9 578.5,450.7 579.5,439.2 580.5,427.3 581.5,415.1 582.5,402.7 583.5,390.1 584.5,377.4 585.5,364.6 586.5,351.8 587.5,339.1 588.5,326.4 589.5,313.9 590.5,301.6 591.5,289.5 592.5,277.8 593.5,266.4 594.5,255.4 595.5,244.8 596.5,234.8 597.5,225.3 598.5,216.4 599.5,208.1 600.5,200.5 601.5,193.5 602.5,187.3 603.5,181.9 604.5,177.2 605.5,173.3 606.5,170.2 607.5,167.9 608.5,166.4 609.5,165.8 610.5,166.1 611.5,167.1 612.5,169.0 613.5,171.8 614.5,175.3 615.5,179.6 616.5,184.8 617.5,190.7 618.5,197.3 619.5,204.6 620.5,212.6 621.5,221.2 622.5,230.5 623.5,240.3 624.5,250.6 625.5,261.4 626.5,272.6 627.5,284.2 628.5,296.1 629.5,308.3 630.5,320.8 631.5,333.4 632.5,346.1 633.5,358.9 634.5,371.7 635.5,384.4 636.5,397.1 637.5,409.6 638.5,421.8 639.5,433.9 640.5,445.6 641.5,456.9 642.5,467.8 643.5,478.3 644.5,488.3 645.5,497.7 646.5,506.5 647.5,514.7 648.5,522.2 649.5,529.0 650.5,535.1 651.5,540.5 652.5,545.1 653.5,548.9 654.5,551.8 655.5,554.0 656.5,555.3 657.5,555.8 658.5,555.4 659.5,554.2 660.5,552.2 661.5,549.4 662.5,545.7 663.5,541.2 664.5,536.0 665.5,530.0 666.5,523.3 667.5,515.8 668.5,507.8 669.5,499.0 670.5,489.7 671.5,479.8 672.5,469.4 673.5,458.6 674.5,447.3 675.5,435.6 676.5,423.7 677.5,411.4 678.5,399.0 679.5,386.3 680.5,373.6 681.5,360.8 682.5,348.0 683.5,335.3 684.5,322.6 685.5,310.2 686.5,297.9 687.5,286.0 688.5,274.3 689.5,263.0 690.5,252.2 691.5,241.8 692.5,231.9 693.5,222.6 694.5,213.8 695.5,205.8 696.5,198.3 697.5,191.6 698.5,185.6 699.5,180.4 700.5,175.9 701.5,172.2 702.5,169.4 703.5,167.4 704.5,166.2 705.5,165.8 706.5,166.3 707.5,167.6 708.5,169.8 709.5,172.7 710.5,176.5 711.5,181.1 712.5,186.5 713.5,192.6 714.5,199.4 715.5,206.9 716.5,215.1 717.5,223.9 718.5,233.3 719.5,243.3 720.5,253.8 721.5,264.7 722.5,276.0 723.5,287.7 724.5,299.8 725.5,312.0 726.5,324.5 727.5,337.2 728.5,349.9 729.5,362.7 730.5,375.5 731.5,388.2 732.5,400.8 733.5,413.3 734.5,425.5 735.5,437.4 736.5,449.0 737.5,460.2 738.5,471.0 739.5,481.3 740.5,491.1 741.5,500.4 742.5,509.0 743.5,517.0 744.5,524.3 745.5,530.9 746.5,536.8 747.5,542.0 748.5,546.3 749.5,549.8 750.5,552.6 751.5,554.5 752.5,555.5 753.5,555.8 754.5,555.2 755.5,553.7 756.5,551.4 757.5,548.3 758.5,544.4 759.5,539.7" stroke="#2dd6d2" stroke-width="1.3"/><polygon points="42.5,274.7 43.5,275.2 44.5,276.0 45.5,277.2 46.5,278.8 47.5,280.8 48.5,283.1 49.5,285.8 50.5,288.8 51.5,292.1 52.5,295.8 53.5,299.7 54.5,303.9 55.5,308.4 56.5,313.1 57.5,318.0 58.5,323.1 59.5,328.4 60.5,333.8 61.5,339.4 62.5,345.0 63.5,350.8 64.5,356.6 65.5,362.4 66.5,368.3 67.5,374.1 68.5,379.9 69.5,385.6 70.5,391.2 71.5,396.7 72.5,402.0 73.5,407.2 74.5,412.2 75.5,417.0 76.5,421.6 77.5,425.9 78.5,429.9 79.5,433.6 80.5,437.1 81.5,440.2 82.5,443.0 83.5,445.5 84.5,447.6 85.5,449.4 86.5,450.7 87.5,451.7 88.5,452.4 89.5,452.6 90.5,452.5 91.5,451.9 92.5,451.0 93.5,449.7 94.5,448.1 95.5,446.1 96.5,443.7 97.5,441.0 98.5,437.9 99.5,434.5 100.5,430.9 101.5,426.9 102.5,422.7 103.5,418.2 104.5,413.4 105.5,408.5 106.5,403.3 107.5,398.0 108.5,392.6 109.5,387.0 110.5,381.3 111.5,375.5 112.5,369.7 113.5,363.9 114.5,358.1 115.5,352.2 116.5,346.5 117.5,340.8 118.5,335.2 119.5,329.7 120.5,324.4 121.5,319.2 122.5,314.3 123.5,309.5 124.5,305.0 125.5,300.7 126.5,296.7 127.5,293.0 128.5,289.6 129.5,286.5 130.5,283.8 131.5,281.4 132.5,279.3 133.5,277.6 134.5,276.3 135.5,275.3 136.5,274.8 137.5,274.6 138.5,274.8 139.5,275.4 140.5,276.3 141.5,277.7 142.5,279.4 143.5,281.5 144.5,283.9 145.5,286.7 146.5,289.8 147.5,293.2 148.5,296.9 149.5,300.9 150.5,305.2 151.5,309.7 152.5,314.5 153.5,319.5 154.5,324.6 155.5,330.0 156.5,335.5 157.5,341.1 158.5,346.8 159.5,352.5 160.5,358.3 161.5,364.2 162.5,370.0 163.5,375.8 164.5,381.6 165.5,387.3 166.5,392.8 167.5,398.3 168.5,403.6 169.5,408.7 170.5,413.7 171.5,418.4 172.5,422.9 173.5,427.1 174.5,431.1 175.5,434.7 176.5,438.1 177.5,441.1 178.5,443.8 179.5,446.2 180.5,448.2 181.5,449.8 182.5,451.1 183.5,452.0 184.5,452.5 185.5,452.6 186.5,452.3 187.5,451.7 188.5,450.7 189.5,449.3 190.5,447.5 191.5,445.4 192.5,442.9 193.5,440.1 194.5,436.9 195.5,433.5 196.5,429.7 197.5,425.6 198.5,421.3 199.5,416.8 200.5,412.0 201.5,407.0 202.5,401.8 203.5,396.4 204.5,390.9 205.5,385.3 206.5,379.6 207.5,373.8 208.5,368.0 209.5,362.1 210.5,356.3 211.5,350.5 212.5,344.8 213.5,339.1 214.5,333.5 215.5,328.1 216.5,322.8 217.5,317.7 218.5,312.8 219.5,308.1 220.5,303.7 221.5,299.5 222.5,295.6 223.5,292.0 224.5,288.6 225.5,285.7 226.5,283.0 227.5,280.7 228.5,278.8 229.5,277.2 230.5,276.0 231.5,275.1 232.5,274.7 233.5,274.6 234.5,274.9 235.5,275.6 236.5,276.7 237.5,278.2 238.5,280.0 239.5,282.2 240.5,284.7 241.5,287.6 242.5,290.8 243.5,294.3 244.5,298.1 245.5,302.2 246.5,306.5 247.5,311.1 248.5,316.0 249.5,321.0 250.5,326.2 251.5,331.6 252.5,337.1 253.5,342.8 254.5,348.5 255.5,354.3 256.5,360.1 257.5,365.9 258.5,371.8 259.5,377.6 260.5,383.3 261.5,389.0 262.5,394.5 263.5,399.9 264.5,405.2 265.5,410.2 266.5,415.1 267.5,419.8 268.5,424.2 269.5,428.3 270.5,432.2 271.5,435.8 272.5,439.0 273.5,442.0 274.5,444.6 275.5,446.8 276.5,448.7 277.5,450.2 278.5,451.4 279.5,452.2 280.5,452.5 281.5,452.6 282.5,452.2 283.5,451.4 284.5,450.3 285.5,448.8 286.5,446.9 287.5,444.7 288.5,442.1 289.5,439.2 290.5,435.9 291.5,432.4 292.5,428.5 293.5,424.4 294.5,420.0 295.5,415.3 296.5,410.5 297.5,405.4 298.5,400.2 299.5,394.8 300.5,389.2 301.5,383.6 302.5,377.9 303.5,372.1 304.5,366.2 305.5,360.4 306.5,354.6 307.5,348.8 308.5,343.0 309.5,337.4 310.5,331.9 311.5,326.5 312.5,321.3 313.5,316.2 314.5,311.4 315.5,306.8 316.5,302.4 317.5,298.3 318.5,294.5 319.5,290.9 320.5,287.7 321.5,284.8 322.5,282.3 323.5,280.1 324.5,278.2 325.5,276.8 326.5,275.7 327.5,275.0 328.5,274.6 329.5,274.7 330.5,275.1 331.5,275.9 332.5,277.1 333.5,278.7 334.5,280.6 335.5,282.9 336.5,285.5 337.5,288.5 338.5,291.8 339.5,295.4 340.5,299.3 341.5,303.5 342.5,307.9 343.5,312.6 344.5,317.5 345.5,322.6 346.5,327.8 347.5,333.3 348.5,338.8 349.5,344.5 350.5,350.2 351.5,356.0 352.5,361.8 353.5,367.7 354.5,373.5 355.5,379.3 356.5,385.0 357.5,390.6 358.5,396.1 359.5,401.5 360.5,406.7 361.5,411.7 362.5,416.5 363.5,421.1 364.5,425.4 365.5,429.5 366.5,433.3 367.5,436.8 368.5,439.9 369.5,442.8 370.5,445.3 371.5,447.4 372.5,449.2 373.5,450.6 374.5,451.7 375.5,452.3 376.5,452.6 377.5,452.5 378.5,452.0 379.5,451.1 380.5,449.9 381.5,448.3 382.5,446.3 383.5,443.9 384.5,441.3 385.5,438.2 386.5,434.9 387.5,431.2 388.5,427.3 389.5,423.1 390.5,418.6 391.5,413.9 392.5,409.0 393.5,403.9 394.5,398.6 395.5,393.1 396.5,387.6 397.5,381.9 398.5,376.1 399.5,370.3 400.5,364.5 401.5,358.6 402.5,352.8 403.5,347.0 404.5,341.3 405.5,335.7 406.5,330.3 407.5,324.9 408.5,319.7 409.5,314.7 410.5,310.0 411.5,305.4 412.5,301.1 413.5,297.1 414.5,293.4 415.5,289.9 416.5,286.8 417.5,284.0 418.5,281.6 419.5,279.5 420.5,277.8 421.5,276.4 422.5,275.4 423.5,274.8 424.5,274.6 425.5,274.8 426.5,275.3 427.5,276.2 428.5,277.5 429.5,279.2 430.5,281.2 431.5,283.6 432.5,286.4 433.5,289.4 434.5,292.8 435.5,296.5 436.5,300.5 437.5,304.8 438.5,309.3 439.5,314.0 440.5,319.0 441.5,324.1 442.5,329.4 443.5,334.9 444.5,340.5 445.5,346.2 446.5,351.9 447.5,357.8 448.5,363.6 449.5,369.4 450.5,375.3 451.5,381.0 452.5,386.7 453.5,392.3 454.5,397.8 455.5,403.1 456.5,408.2 457.5,413.2 458.5,417.9 459.5,422.4 460.5,426.7 461.5,430.7 462.5,434.4 463.5,437.8 464.5,440.8 465.5,443.6 466.5,446.0 467.5,448.0 468.5,449.7 469.5,451.0 470.5,451.9 471.5,452.4 472.5,452.6 473.5,452.4 474.5,451.8 475.5,450.8 476.5,449.4 477.5,447.7 478.5,445.6 479.5,443.2 480.5,440.4 481.5,437.3 482.5,433.8 483.5,430.1 484.5,426.1 485.5,421.8 486.5,417.2 487.5,412.5 488.5,407.5 489.5,402.3 490.5,396.9 491.5,391.5 492.5,385.9 493.5,380.2 494.5,374.4 495.5,368.6 496.5,362.7 497.5,356.9 498.5,351.1 499.5,345.3 500.5,339.6 501.5,334.1 502.5,328.6 503.5,323.3 504.5,318.2 505.5,313.3 506.5,308.6 507.5,304.1 508.5,299.9 509.5,296.0 510.5,292.3 511.5,289.0 512.5,285.9 513.5,283.3 514.5,280.9 515.5,278.9 516.5,277.3 517.5,276.1 518.5,275.2 519.5,274.7 520.5,274.6 521.5,274.9 522.5,275.5 523.5,276.6 524.5,278.0 525.5,279.8 526.5,281.9 527.5,284.4 528.5,287.3 529.5,290.4 530.5,293.9 531.5,297.7 532.5,301.8 533.5,306.1 534.5,310.7 535.5,315.5 536.5,320.5 537.5,325.7 538.5,331.1 539.5,336.6 540.5,342.2 541.5,347.9 542.5,353.7 543.5,359.5 544.5,365.4 545.5,371.2 546.5,377.0 547.5,382.7 548.5,388.4 549.5,393.9 550.5,399.4 551.5,404.6 552.5,409.7 553.5,414.6 554.5,419.3 555.5,423.7 556.5,427.9 557.5,431.8 558.5,435.4 559.5,438.7 560.5,441.7 561.5,444.3 562.5,446.6 563.5,448.5 564.5,450.1 565.5,451.3 566.5,452.1 567.5,452.5 568.5,452.6 569.5,452.2 570.5,451.5 571.5,450.4 572.5,449.0 573.5,447.1 574.5,444.9 575.5,442.4 576.5,439.5 577.5,436.3 578.5,432.7 579.5,428.9 580.5,424.8 581.5,420.4 582.5,415.8 583.5,411.0 584.5,405.9 585.5,400.7 586.5,395.3 587.5,389.8 588.5,384.2 589.5,378.4 590.5,372.6 591.5,366.8 592.5,361.0 593.5,355.1 594.5,349.3 595.5,343.6 596.5,338.0 597.5,332.4 598.5,327.0 599.5,321.8 600.5,316.7 601.5,311.9 602.5,307.2 603.5,302.8 604.5,298.7 605.5,294.8 606.5,291.3 607.5,288.0 608.5,285.1 609.5,282.5 610.5,280.3 611.5,278.4 612.5,276.9 613.5,275.8 614.5,275.0 615.5,274.6 616.5,274.7 617.5,275.0 618.5,275.8 619.5,277.0 620.5,278.5 621.5,280.4 622.5,282.6 623.5,285.2 624.5,288.2 625.5,291.4 626.5,295.0 627.5,298.9 628.5,303.0 629.5,307.4 630.5,312.1 631.5,317.0 632.5,322.0 633.5,327.3 634.5,332.7 635.5,338.2 636.5,343.9 637.5,349.6 638.5,355.4 639.5,361.3 640.5,367.1 641.5,372.9 642.5,378.7 643.5,384.4 644.5,390.1 645.5,395.6 646.5,401.0 647.5,406.2 648.5,411.2 649.5,416.1 650.5,420.7 651.5,425.0 652.5,429.1 653.5,432.9 654.5,436.4 655.5,439.6 656.5,442.5 657.5,445.0 658.5,447.2 659.5,449.0 660.5,450.5 661.5,451.6 662.5,452.3 663.5,452.6 664.5,452.5 665.5,452.1 666.5,451.2 667.5,450.0 668.5,448.4 669.5,446.5 670.5,444.2 671.5,441.5 672.5,438.6 673.5,435.2 674.5,431.6 675.5,427.7 676.5,423.5 677.5,419.1 678.5,414.4 679.5,409.5 680.5,404.4 681.5,399.1 682.5,393.7 683.5,388.1 684.5,382.4 685.5,376.7 686.5,370.9 687.5,365.1 688.5,359.2 689.5,353.4 690.5,347.6 691.5,341.9 692.5,336.3 693.5,330.8 694.5,325.4 695.5,320.2 696.5,315.2 697.5,310.4 698.5,305.9 699.5,301.6 700.5,297.5 701.5,293.7 702.5,290.3 703.5,287.1 704.5,284.3 705.5,281.8 706.5,279.7 707.5,277.9 708.5,276.5 709.5,275.5 710.5,274.9 711.5,274.6 712.5,274.7 713.5,275.2 714.5,276.1 715.5,277.4 716.5,279.0 717.5,281.0 718.5,283.4 719.5,286.1 720.5,289.1 721.5,292.5 722.5,296.1 723.5,300.1 724.5,304.3 725.5,308.8 726.5,313.5 727.5,318.5 728.5,323.6 729.5,328.9 730.5,334.4 731.5,339.9 732.5,345.6 733.5,351.4 734.5,357.2 735.5,363.0 736.5,368.9 737.5,374.7 738.5,380.4 739.5,386.1 740.5,391.7 741.5,397.2 742.5,402.6 743.5,407.7 744.5,412.7 745.5,417.5 746.5,422.0 747.5,426.3 748.5,430.3 749.5,434.0 750.5,437.4 751.5,440.5 752.5,443.3 753.5,445.7 754.5,447.8 755.5,449.5 756.5,450.9 757.5,451.8 758.5,452.4 759.5,452.6 759.5,449.9 758.5,449.7 757.5,449.2 756.5,448.2 755.5,446.9 754.5,445.3 753.5,443.3 752.5,440.9 751.5,438.2 750.5,435.2 749.5,431.9 748.5,428.3 747.5,424.4 746.5,420.2 745.5,415.8 744.5,411.2 743.5,406.4 742.5,401.4 741.5,396.2 740.5,390.9 739.5,385.5 738.5,379.9 737.5,374.3 736.5,368.7 735.5,363.0 734.5,357.4 733.5,351.7 732.5,346.2 731.5,340.6 730.5,335.2 729.5,329.9 728.5,324.8 727.5,319.8 726.5,315.0 725.5,310.5 724.5,306.1 723.5,302.0 722.5,298.2 721.5,294.6 720.5,291.4 719.5,288.4 718.5,285.8 717.5,283.5 716.5,281.6 715.5,280.0 714.5,278.8 713.5,277.9 712.5,277.4 711.5,277.3 710.5,277.5 709.5,278.1 708.5,279.1 707.5,280.5 706.5,282.2 705.5,284.3 704.5,286.7 703.5,289.4 702.5,292.5 701.5,295.8 700.5,299.5 699.5,303.4 698.5,307.6 697.5,312.0 696.5,316.7 695.5,321.5 694.5,326.6 693.5,331.8 692.5,337.1 691.5,342.6 690.5,348.1 689.5,353.7 688.5,359.4 687.5,365.0 686.5,370.7 685.5,376.3 684.5,381.9 683.5,387.4 682.5,392.8 681.5,398.0 680.5,403.2 679.5,408.1 678.5,412.9 677.5,417.4 676.5,421.7 675.5,425.8 674.5,429.6 673.5,433.1 672.5,436.3 671.5,439.2 670.5,441.8 669.5,444.0 668.5,445.9 667.5,447.4 666.5,448.6 665.5,449.4 664.5,449.8 663.5,449.9 662.5,449.6 661.5,448.9 660.5,447.9 659.5,446.5 658.5,444.7 657.5,442.6 656.5,440.1 655.5,437.4 654.5,434.2 653.5,430.8 652.5,427.1 651.5,423.2 650.5,418.9 649.5,414.5 648.5,409.8 647.5,404.9 646.5,399.8 645.5,394.6 644.5,389.3 643.5,383.8 642.5,378.3 641.5,372.7 640.5,367.0 639.5,361.3 638.5,355.7 637.5,350.1 636.5,344.5 635.5,339.0 634.5,333.6 633.5,328.4 632.5,323.3 631.5,318.4 630.5,313.6 629.5,309.1 628.5,304.9 627.5,300.8 626.5,297.1 625.5,293.6 624.5,290.4 623.5,287.6 622.5,285.1 621.5,282.9 620.5,281.1 619.5,279.6 618.5,278.5 617.5,277.7 616.5,277.3 615.5,277.3 614.5,277.7 613.5,278.4 612.5,279.5 611.5,281.0 610.5,282.8 609.5,285.0 608.5,287.5 607.5,290.3 606.5,293.4 605.5,296.9 604.5,300.6 603.5,304.6 602.5,308.9 601.5,313.4 600.5,318.1 599.5,323.0 598.5,328.1 597.5,333.4 596.5,338.7 595.5,344.2 594.5,349.8 593.5,355.4 592.5,361.0 591.5,366.7 590.5,372.4 589.5,378.0 588.5,383.5 587.5,389.0 586.5,394.4 585.5,399.6 584.5,404.7 583.5,409.6 582.5,414.3 581.5,418.7 580.5,423.0 579.5,427.0 578.5,430.7 577.5,434.1 576.5,437.2 575.5,440.0 574.5,442.5 573.5,444.6 572.5,446.4 571.5,447.8 570.5,448.9 569.5,449.6 568.5,449.9 567.5,449.9 566.5,449.4 565.5,448.7 564.5,447.5 563.5,446.0 562.5,444.1 561.5,441.9 560.5,439.3 559.5,436.5 558.5,433.3 557.5,429.8 556.5,426.0 555.5,421.9 554.5,417.6 553.5,413.1 552.5,408.4 551.5,403.4 550.5,398.3 549.5,393.0 548.5,387.6 547.5,382.2 546.5,376.6 545.5,371.0 544.5,365.3 543.5,359.6 542.5,354.0 541.5,348.4 540.5,342.8 539.5,337.4 538.5,332.0 537.5,326.8 536.5,321.8 535.5,316.9 534.5,312.3 533.5,307.8 532.5,303.6 531.5,299.7 530.5,296.0 529.5,292.6 528.5,289.6 527.5,286.8 526.5,284.4 525.5,282.3 524.5,280.6 523.5,279.2 522.5,278.2 521.5,277.5 520.5,277.3 519.5,277.4 518.5,277.9 517.5,278.7 516.5,279.9 515.5,281.5 514.5,283.4 513.5,285.7 512.5,288.3 511.5,291.2 510.5,294.4 509.5,298.0 508.5,301.8 507.5,305.9 506.5,310.2 505.5,314.8 504.5,319.6 503.5,324.5 502.5,329.7 501.5,335.0 500.5,340.4 499.5,345.9 498.5,351.5 497.5,357.1 496.5,362.7 495.5,368.4 494.5,374.1 493.5,379.7 492.5,385.2 491.5,390.6 490.5,395.9 489.5,401.1 488.5,406.1 487.5,411.0 486.5,415.6 485.5,420.0 484.5,424.2 483.5,428.1 482.5,431.7 481.5,435.1 480.5,438.1 479.5,440.8 478.5,443.2 477.5,445.2 476.5,446.9 475.5,448.2 474.5,449.1 473.5,449.7 472.5,449.9 471.5,449.8 470.5,449.2 469.5,448.3 468.5,447.1 467.5,445.5 466.5,443.5 465.5,441.2 464.5,438.5 463.5,435.5 462.5,432.2 461.5,428.7 460.5,424.8 459.5,420.7 458.5,416.3 457.5,411.7 456.5,406.9 455.5,401.9 454.5,396.7 453.5,391.4 452.5,386.0 451.5,380.5 450.5,374.9 449.5,369.3 448.5,363.6 447.5,357.9 446.5,352.3 445.5,346.7 444.5,341.2 443.5,335.8 442.5,330.5 441.5,325.3 440.5,320.3 439.5,315.5 438.5,310.9 437.5,306.5 436.5,302.4 435.5,298.5 434.5,295.0 433.5,291.7 432.5,288.7 431.5,286.0 430.5,283.7 429.5,281.7 428.5,280.1 427.5,278.9 426.5,278.0 425.5,277.4 424.5,277.3 423.5,277.5 422.5,278.1 421.5,279.0 420.5,280.3 419.5,282.0 418.5,284.0 417.5,286.4 416.5,289.1 415.5,292.1 414.5,295.5 413.5,299.1 412.5,303.0 411.5,307.2 410.5,311.6 409.5,316.2 408.5,321.1 407.5,326.1 406.5,331.3 405.5,336.6 404.5,342.0 403.5,347.5 402.5,353.1 401.5,358.8 400.5,364.5 399.5,370.1 398.5,375.7 397.5,381.3 396.5,386.8 395.5,392.2 394.5,397.5 393.5,402.7 392.5,407.6 391.5,412.4 390.5,417.0 389.5,421.3 388.5,425.4 387.5,429.2 386.5,432.8 385.5,436.0 384.5,438.9 383.5,441.5 382.5,443.8 381.5,445.7 380.5,447.3 379.5,448.5 378.5,449.3 377.5,449.8 376.5,449.9 375.5,449.7 374.5,449.0 373.5,448.0 372.5,446.6 371.5,444.9 370.5,442.8 369.5,440.4 368.5,437.6 367.5,434.6 366.5,431.2 365.5,427.5 364.5,423.6 363.5,419.4 362.5,414.9 361.5,410.3 360.5,405.4 359.5,400.4 358.5,395.2 357.5,389.8 356.5,384.4 355.5,378.8 354.5,373.2 353.5,367.6 352.5,361.9 351.5,356.2 350.5,350.6 349.5,345.0 348.5,339.6 347.5,334.2 346.5,328.9 345.5,323.8 344.5,318.8 343.5,314.1 342.5,309.6 341.5,305.3 340.5,301.2 339.5,297.4 338.5,293.9 337.5,290.7 336.5,287.9 335.5,285.3 334.5,283.1 333.5,281.2 332.5,279.7 331.5,278.5 330.5,277.8 329.5,277.3 328.5,277.3 327.5,277.6 326.5,278.3 325.5,279.4 324.5,280.8 323.5,282.6 322.5,284.7 321.5,287.2 320.5,290.0 319.5,293.1 318.5,296.5 317.5,300.2 316.5,304.2 315.5,308.5 314.5,312.9 313.5,317.6 312.5,322.5 311.5,327.6 310.5,332.8 309.5,338.2 308.5,343.7 307.5,349.2 306.5,354.8 305.5,360.5 304.5,366.2 303.5,371.8 302.5,377.4 301.5,383.0 300.5,388.5 299.5,393.8 298.5,399.1 297.5,404.2 296.5,409.1 295.5,413.8 294.5,418.3 293.5,422.6 292.5,426.6 291.5,430.3 290.5,433.8 289.5,436.9 288.5,439.7 287.5,442.2 286.5,444.4 285.5,446.2 284.5,447.7 283.5,448.8 282.5,449.5 281.5,449.9 280.5,449.9 279.5,449.5 278.5,448.7 277.5,447.6 276.5,446.1 275.5,444.3 274.5,442.1 273.5,439.6 272.5,436.8 271.5,433.6 270.5,430.1 269.5,426.4 268.5,422.3 267.5,418.1 266.5,413.6 265.5,408.8 264.5,403.9 263.5,398.8 262.5,393.6 261.5,388.2 260.5,382.7 259.5,377.1 258.5,371.5 257.5,365.9 256.5,360.2 255.5,354.5 254.5,348.9 253.5,343.4 252.5,337.9 251.5,332.6 250.5,327.4 249.5,322.3 248.5,317.4 247.5,312.7 246.5,308.3 245.5,304.0 244.5,300.1 243.5,296.4 242.5,293.0 241.5,289.8 240.5,287.1 239.5,284.6 238.5,282.5 237.5,280.7 236.5,279.3 235.5,278.3 234.5,277.6 233.5,277.3 232.5,277.4 231.5,277.8 230.5,278.6 229.5,279.8 228.5,281.3 227.5,283.2 226.5,285.4 225.5,288.0 224.5,290.9 223.5,294.1 222.5,297.6 221.5,301.4 220.5,305.5 219.5,309.8 218.5,314.3 217.5,319.1 216.5,324.0 215.5,329.2 214.5,334.4 213.5,339.8 212.5,345.3 211.5,350.9 210.5,356.5 209.5,362.2 208.5,367.8 207.5,373.5 206.5,379.1 205.5,384.6 204.5,390.1 203.5,395.4 202.5,400.6 201.5,405.7 200.5,410.5 199.5,415.2 198.5,419.6 197.5,423.8 196.5,427.7 195.5,431.4 194.5,434.7 193.5,437.8 192.5,440.5 191.5,442.9 190.5,445.0 189.5,446.7 188.5,448.1 187.5,449.1 186.5,449.7 185.5,449.9 184.5,449.8 183.5,449.3 182.5,448.4 181.5,447.2 180.5,445.6 179.5,443.7 178.5,441.4 177.5,438.8 176.5,435.8 175.5,432.6 174.5,429.0 173.5,425.2 172.5,421.1 171.5,416.7 170.5,412.2 169.5,407.4 168.5,402.4 167.5,397.3 166.5,392.0 165.5,386.6 164.5,381.0 163.5,375.5 162.5,369.8 161.5,364.2 160.5,358.5 159.5,352.9 158.5,347.3 157.5,341.7 156.5,336.3 155.5,331.0 154.5,325.8 153.5,320.8 152.5,316.0 151.5,311.4 150.5,307.0 149.5,302.8 148.5,298.9 147.5,295.3 146.5,292.0 145.5,289.0 144.5,286.3 143.5,283.9 142.5,281.9 141.5,280.3 140.5,279.0 139.5,278.0 138.5,277.5 137.5,277.3 136.5,277.4 135.5,278.0 134.5,278.9 133.5,280.2 132.5,281.8 131.5,283.8 130.5,286.2 129.5,288.8 128.5,291.8 127.5,295.1 126.5,298.7 125.5,302.6 124.5,306.7 123.5,311.1 122.5,315.7 121.5,320.6 120.5,325.6 119.5,330.7 118.5,336.0 117.5,341.5 116.5,347.0 115.5,352.6 114.5,358.2 113.5,363.9 112.5,369.5 111.5,375.2 110.5,380.8 109.5,386.3 108.5,391.7 107.5,397.0 106.5,402.1 105.5,407.1 104.5,411.9 103.5,416.5 102.5,420.9 101.5,425.0 100.5,428.8 99.5,432.4 98.5,435.7 97.5,438.6 96.5,441.3 95.5,443.6 94.5,445.5 93.5,447.2 92.5,448.4 91.5,449.3 90.5,449.8 89.5,449.9 88.5,449.7 87.5,449.1 86.5,448.1 85.5,446.8 84.5,445.1 83.5,443.0 82.5,440.7 81.5,437.9 80.5,434.9 79.5,431.5 78.5,427.9 77.5,424.0 76.5,419.8 75.5,415.4 74.5,410.7 73.5,405.9 72.5,400.9 71.5,395.7 70.5,390.4 69.5,384.9 68.5,379.4 67.5,373.8 66.5,368.1 65.5,362.5 64.5,356.8 63.5,351.2 62.5,345.6 61.5,340.1 60.5,334.7 59.5,329.4 58.5,324.3 57.5,319.3 56.5,314.6 55.5,310.0 54.5,305.7 53.5,301.6 52.5,297.8 51.5,294.3 50.5,291.1 49.5,288.1 48.5,285.5 47.5,283.3 46.5,281.4 45.5,279.8 44.5,278.6 43.5,277.8 42.5,277.4" fill="#5a5a0e" stroke="#5a5a0e" stroke-width="1"/><polyline points="42.5,274.7 43.5,275.2 44.5,276.0 45.5,277.2 46.5,278.8 47.5,280.8 48.5,283.1 49.5,285.8 50.5,288.8 51.5,292.1 52.5,295.8 53.5,299.7 54.5,303.9 55.5,308.4 56.5,313.1 57.5,318.0 58.5,323.1 59.5,328.4 60.5,333.8 61.5,339.4 62.5,345.0 63.5,350.8 64.5,356.6 65.5,362.4 66.5,368.3 67.5,374.1 68.5,379.9 69.5,385.6 70.5,391.2 71.5,396.7 72.5,402.0 73.5,407.2 74.5,412.2 75.5,417.0 76.5,421.6 77.5,425.9 78.5,429.9 79.5,433.6 80.5,437.1 81.5,440.2 82.5,443.0 83.5,445.5 84.5,447.6 85.5,449.4 86.5,450.7 87.5,451.7 88.5,452.4 89.5,452.6 90.5,452.5 91.5,451.9 92.5,451.0 93.5,449.7 94.5,448.1 95.5,446.1 96.5,443.7 97.5,441.0 98.5,437.9 99.5,434.5 100.5,430.9 101.5,426.9 102.5,422.7 103.5,418.2 104.5,413.4 105.5,408.5 106.5,403.3 107.5,398.0 108.5,392.6 109.5,387.0 110.5,381.3 111.5,375.5 112.5,369.7 113.5,363.9 114.5,358.1 115.5,352.2 116.5,346.5 117.5,340.8 118.5,335.2 119.5,329.7 120.5,324.4 121.5,319.2 122.5,314.3 123.5,309.5 124.5,305.0 125.5,300.7 126.5,296.7 127.5,293.0 128.5,289.6 129.5,286.5 130.5,283.8 131.5,281.4 132.5,279.3 133.5,277.6 134.5,276.3 135.5,275.3 136.5,274.8 137.5,274.6 138.5,274.8 139.5,275.4 140.5,276.3 141.5,277.7 142.5,279.4 143.5,281.5 144.5,283.9 145.5,286.7 146.5,289.8 147.5,293.2 148.5,296.9 149.5,300.9 150.5,305.2 151.5,309.7 152.5,314.5 153.5,319.5 154.5,324.6 155.5,330.0 156.5,335.5 157.5,341.1 158.5,346.8 159.5,352.5 160.5,358.3 161.5,364.2 162.5,370.0 163.5,375.8 164.5,381.6 165.5,387.3 166.5,392.8 167.5,398.3 168.5,403.6 169.5,408.7 170.5,413.7 171.5,418.4 172.5,422.9 173.5,427.1 174.5,431.1 175.5,434.7 176.5,438.1 177.5,441.1 178.5,443.8 179.5,446.2 180.5,448.2 181.5,449.8 182.5,451.1 183.5,452.0 184.5,452.5 185.5,452.6 186.5,452.3 187.5,451.7 188.5,450.7 189.5,449.3 190.5,447.5 191.5,445.4 192.5,442.9 193.5,440.1 194.5,436.9 195.5,433.5 196.5,429.7 197.5,425.6 198.5,421.3 199.5,416.8 200.5,412.0 201.5,407.0 202.5,401.8 203.5,396.4 204.5,390.9 205.5,385.3 206.5,379.6 207.5,373.8 208.5,368.0 209.5,362.1 210.5,356.3 211.5,350.5 212.5,344.8 213.5,339.1 214.5,333.5 215.5,328.1 216.5,322.8 217.5,317.7 218.5,312.8 219.5,308.1 220.5,303.7 221.5,299.5 222.5,295.6 223.5,292.0 224.5,288.6 225.5,285.7 226.5,283.0 227.5,280.7 228.5,278.8 229.5,277.2 230.5,276.0 231.5,275.1 232.5,274.7 233.5,274.6 234.5,274.9 235.5,275.6 236.5,276.7 237.5,278.2 238.5,280.0 239.5,282.2 240.5,284.7 241.5,287.6 242.5,290.8 243.5,294.3 244.5,298.1 245.5,302.2 246.5,306.5 247.5,311.1 248.5,316.0 249.5,321.0 250.5,326.2 251.5,331.6 252.5,337.1 253.5,342.8 254.5,348.5 255.5,354.3 256.5,360.1 257.5,365.9 258.5,371.8 259.5,377.6 260.5,383.3 261.5,389.0 262.5,394.5 263.5,399.9 264.5,405.2 265.5,410.2 266.5,415.1 267.5,419.8 268.5,424.2 269.5,428.3 270.5,432.2 271.5,435.8 272.5,439.0 273.5,442.0 274.5,444.6 275.5,446.8 276.5,448.7 277.5,450.2 278.5,451.4 279.5,452.2 280.5,452.5 281.5,452.6 282.5,452.2 283.5,451.4 284.5,450.3 285.5,448.8 286.5,446.9 287.5,444.7 288.5,442.1 289.5,439.2 290.5,435.9 291.5,432.4 292.5,428.5 293.5,424.4 294.5,420.0 295.5,415.3 296.5,410.5 297.5,405.4 298.5,400.2 299.5,394.8 300.5,389.2 301.5,383.6 302.5,377.9 303.5,372.1 304.5,366.2 305.5,360.4 306.5,354.6 307.5,348.8 308.5,343.0 309.5,337.4 310.5,331.9 311.5,326.5 312.5,321.3 313.5,316.2 314.5,311.4 315.5,306.8 316.5,302.4 317.5,298.3 318.5,294.5 319.5,290.9 320.5,287.7 321.5,284.8 322.5,282.3 323.5,280.1 324.5,278.2 325.5,276.8 326.5,275.7 327.5,275.0 328.5,274.6 329.5,274.7 330.5,275.1 331.5,275.9 332.5,277.1 333.5,278.7 334.5,280.6 335.5,282.9 336.5,285.5 337.5,288.5 338.5,291.8 339.5,295.4 340.5,299.3 341.5,303.5 342.5,307.9 343.5,312.6 344.5,317.5 345.5,322.6 346.5,327.8 347.5,333.3 348.5,338.8 349.5,344.5 350.5,350.2 351.5,356.0 352.5,361.8 353.5,367.7 354.5,373.5 355.5,379.3 356.5,385.0 357.5,390.6 358.5,396.1 359.5,401.5 360.5,406.7 361.5,411.7 362.5,416.5 363.5,421.1 364.5,425.4 365.5,429.5 366.5,433.3 367.5,436.8 368.5,439.9 369.5,442.8 370.5,445.3 371.5,447.4 372.5,449.2 373.5,450.6 374.5,451.7 375.5,452.3 376.5,452.6 377.5,452.5 378.5,452.0 379.5,451.1 380.5,449.9 381.5,448.3 382.5,446.3 383.5,443.9 384.5,441.3 385.5,438.2 386.5,434.9 387.5,431.2 388.5,427.3 389.5,423.1 390.5,418.6 391.5,413.9 392.5,409.0 393.5,403.9 394.5,398.6 395.5,393.1 396.5,387.6 397.5,381.9 398.5,376.1 399.5,370.3 400.5,364.5 401.5,358.6 402.5,352.8 403.5,347.0 404.5,341.3 405.5,335.7 406.5,330.3 407.5,324.9 408.5,319.7 409.5,314.7 410.5,310.0 411.5,305.4 412.5,301.1 413.5,297.1 414.5,293.4 415.5,289.9 416.5,286.8 417.5,284.0 418.5,281.6 419.5,279.5 420.5,277.8 421.5,276.4 422.5,275.4 423.5,274.8 424.5,274.6 425.5,274.8 426.5,275.3 427.5,276.2 428.5,277.5 429.5,279.2 430.5,281.2 431.5,283.6 432.5,286.4 433.5,289.4 434.5,292.8 435.5,296.5 436.5,300.5 437.5,304.8 438.5,309.3 439.5,314.0 440.5,319.0 441.5,324.1 442.5,329.4 443.5,334.9 444.5,340.5 445.5,346.2 446.5,351.9 447.5,357.8 448.5,363.6 449.5,369.4 450.5,375.3 451.5,381.0 452.5,386.7 453.5,392.3 454.5,397.8 455.5,403.1 456.5,408.2 457.5,413.2 458.5,417.9 459.5,422.4 460.5,426.7 461.5,430.7 462.5,434.4 463.5,437.8 464.5,440.8 465.5,443.6 466.5,446.0 467.5,448.0 468.5,449.7 469.5,451.0 470.5,451.9 471.5,452.4 472.5,452.6 473.5,452.4 474.5,451.8 475.5,450.8 476.5,449.4 477.5,447.7 478.5,445.6 479.5,443.2 480.5,440.4 481.5,437.3 482.5,433.8 483.5,430.1 484.5,426.1 485.5,421.8 486.5,417.2 487.5,412.5 488.5,407.5 489.5,402.3 490.5,396.9 491.5,391.5 492.5,385.9 493.5,380.2 494.5,374.4 495.5,368.6 496.5,362.7 497.5,356.9 498.5,351.1 499.5,345.3 500.5,339.6 501.5,334.1 502.5,328.6 503.5,323.3 504.5,318.2 505.5,313.3 506.5,308.6 507.5,304.1 508.5,299.9 509.5,296.0 510.5,292.3 511.5,289.0 512.5,285.9 513.5,283.3 514.5,280.9 515.5,278.9 516.5,277.3 517.5,276.1 518.5,275.2 519.5,274.7 520.5,274.6 521.5,274.9 522.5,275.5 523.5,276.6 524.5,278.0 525.5,279.8 526.5,281.9 527.5,284.4 528.5,287.3 529.5,290.4 530.5,293.9 531.5,297.7 532.5,301.8 533.5,306.1 534.5,310.7 535.5,315.5 536.5,320.5 537.5,325.7 538.5,331.1 539.5,336.6 540.5,342.2 541.5,347.9 542.5,353.7 543.5,359.5 544.5,365.4 545.5,371.2 546.5,377.0 547.5,382.7 548.5,388.4 549.5,393.9 550.5,399.4 551.5,404.6 552.5,409.7 553.5,414.6 554.5,419.3 555.5,423.7 556.5,427.9 557.5,431.8 558.5,435.4 559.5,438.7 560.5,441.7 561.5,444.3 562.5,446.6 563.5,448.5 564.5,450.1 565.5,451.3 566.5,452.1 567.5,452.5 568.5,452.6 569.5,452.2 570.5,451.5 571.5,450.4 572.5,449.0 573.5,447.1 574.5,444.9 575.5,442.4 576.5,439.5 577.5,436.3 578.5,432.7 579.5,428.9 580.5,424.8 581.5,420.4 582.5,415.8 583.5,411.0 584.5,405.9 585.5,400.7 586.5,395.3 587.5,389.8 588.5,384.2 589.5,378.4 590.5,372.6 591.5,366.8 592.5,361.0 593.5,355.1 594.5,349.3 595.5,343.6 596.5,338.0 597.5,332.4 598.5,327.0 599.5,321.8 600.5,316.7 601.5,311.9 602.5,307.2 603.5,302.8 604.5,298.7 605.5,294.8 606.5,291.3 607.5,288.0 608.5,285.1 609.5,282.5 610.5,280.3 611.5,278.4 612.5,276.9 613.5,275.8 614.5,275.0 615.5,274.6 616.5,274.7 617.5,275.0 618.5,275.8 619.5,277.0 620.5,278.5 621.5,280.4 622.5,282.6 623.5,285.2 624.5,288.2 625.5,291.4 626.5,295.0 627.5,298.9 628.5,303.0 629.5,307.4 630.5,312.1 631.5,317.0 632.5,322.0 633.5,327.3 634.5,332.7 635.5,338.2 636.5,343.9 637.5,349.6 638.5,355.4 639.5,361.3 640.5,367.1 641.5,372.9 642.5,378.7 643.5,384.4 644.5,390.1 645.5,395.6 646.5,401.0 647.5,406.2 648.5,411.2 649.5,416.1 650.5,420.7 651.5,425.0 652.5,429.1 653.5,432.9 654.5,436.4 655.5,439.6 656.5,442.5 657.5,445.0 658.5,447.2 659.5,449.0 660.5,450.5 661.5,451.6 662.5,452.3 663.5,452.6 664.5,452.5 665.5,452.1 666.5,451.2 667.5,450.0 668.5,448.4 669.5,446.5 670.5,444.2 671.5,441.5 672.5,438.6 673.5,435.2 674.5,431.6 675.5,427.7 676.5,423.5 677.5,419.1 678.5,414.4 679.5,409.5 680.5,404.4 681.5,399.1 682.5,393.7 683.5,388.1 684.5,382.4 685.5,376.7 686.5,370.9 687.5,365.1 688.5,359.2 689.5,353.4 690.5,347.6 691.5,341.9 692.5,336.3 693.5,330.8 694.5,325.4 695.5,320.2 696.5,315.2 697.5,310.4 698.5,305.9 699.5,301.6 700.5,297.5 701.5,293.7 702.5,290.3 703.5,287.1 704.5,284.3 705.5,281.8 706.5,279.7 707.5,277.9 708.5,276.5 709.5,275.5 710.5,274.9 711.5,274.6 712.5,274.7 713.5,275.2 714.5,276.1 715.5,277.4 716.5,279.0 717.5,281.0 718.5,283.4 719.5,286.1 720.5,289.1 721.5,292.5 722.5,296.1 723.5,300.1 724.5,304.3 725.5,308.8 726.5,313.5 727.5,318.5 728.5,323.6 729.5,328.9 730.5,334.4 731.5,339.9 732.5,345.6 733.5,351.4 734.5,357.2 735.5,363.0 736.5,368.9 737.5,374.7 738.5,380.4 739.5,386.1 740.5,391.7 741.5,397.2 742.5,402.6 743.5,407.7 744.5,412.7 745.5,417.5 746.5,422.0 747.5,426.3 748.5,430.3 749.5,434.0 750.5,437.4 751.5,440.5 752.5,443.3 753.5,445.7 754.5,447.8 755.5,449.5 756.5,450.9 757.5,451.8 758.5,452.4 759.5,452.6" stroke="#46460a" stroke-width="3.3"/><polyline points="42.5,274.7 43.5,275.2 44.5,276.0 45.5,277.2 46.5,278.8 47.5,280.8 48.5,283.1 49.5,285.8 50.5,288.8 51.5,292.1 52.5,295.8 53.5,299.7 54.5,303.9 55.5,308.4 56.5,313.1 57.5,318.0 58.5,323.1 59.5,328.4 60.5,333.8 61.5,339.4 62.5,345.0 63.5,350.8 64.5,356.6 65.5,362.4 66.5,368.3 67.5,374.1 68.5,379.9 69.5,385.6 70.5,391.2 71.5,396.7 72.5,402.0 73.5,407.2 74.5,412.2 75.5,417.0 76.5,421.6 77.5,425.9 78.5,429.9 79.5,433.6 80.5,437.1 81.5,440.2 82.5,443.0 83.5,445.5 84.5,447.6 85.5,449.4 86.5,450.7 87.5,451.7 88.5,452.4 89.5,452.6 90.5,452.5 91.5,451.9 92.5,451.0 93.5,449.7 94.5,448.1 95.5,446.1 96.5,443.7 97.5,441.0 98.5,437.9 99.5,434.5 100.5,430.9 101.5,426.9 102.5,422.7 103.5,418.2 104.5,413.4 105.5,408.5 106.5,403.3 107.5,398.0 108.5,392.6 109.5,387.0 110.5,381.3 111.5,375.5 112.5,369.7 113.5,363.9 114.5,358.1 115.5,352.2 116.5,346.5 117.5,340.8 118.5,335.2 119.5,329.7 120.5,324.4 121.5,319.2 122.5,314.3 123.5,309.5 124.5,305.0 125.5,300.7 126.5,296.7 127.5,293.0 128.5,289.6 129.5,286.5 130.5,283.8 131.5,281.4 132.5,279.3 133.5,277.6 134.5,276.3 135.5,275.3 136.5,274.8 137.5,274.6 138.5,274.8 139.5,275.4 140.5,276.3 141.5,277.7 142.5,279.4 143.5,281.5 144.5,283.9 145.5,286.7 146.5,289.8 147.5,293.2 148.5,296.9 149.5,300.9 150.5,305.2 151.5,309.7 152.5,314.5 153.5,319.5 154.5,324.6 155.5,330.0 156.5,335.5 157.5,341.1 158.5,346.8 159.5,352.5 160.5,358.3 161.5,364.2 162.5,370.0 163.5,375.8 164.5,381.6 165.5,387.3 166.5,392.8 167.5,398.3 168.5,403.6 169.5,408.7 170.5,413.7 171.5,418.4 172.5,422.9 173.5,427.1 174.5,431.1 175.5,434.7 176.5,438.1 177.5,441.1 178.5,443.8 179.5,446.2 180.5,448.2 181.5,449.8 182.5,451.1 183.5,452.0 184.5,452.5 185.5,452.6 186.5,452.3 187.5,451.7 188.5,450.7 189.5,449.3 190.5,447.5 191.5,445.4 192.5,442.9 193.5,440.1 194.5,436.9 195.5,433.5 196.5,429.7 197.5,425.6 198.5,421.3 199.5,416.8 200.5,412.0 201.5,407.0 202.5,401.8 203.5,396.4 204.5,390.9 205.5,385.3 206.5,379.6 207.5,373.8 208.5,368.0 209.5,362.1 210.5,356.3 211.5,350.5 212.5,344.8 213.5,339.1 214.5,333.5 215.5,328.1 216.5,322.8 217.5,317.7 218.5,312.8 219.5,308.1 220.5,303.7 221.5,299.5 222.5,295.6 223.5,292.0 224.5,288.6 225.5,285.7 226.5,283.0 227.5,280.7 228.5,278.8 229.5,277.2 230.5,276.0 231.5,275.1 232.5,274.7 233.5,274.6 234.5,274.9 235.5,275.6 236.5,276.7 237.5,278.2 238.5,280.0 239.5,282.2 240.5,284.7 241.5,287.6 242.5,290.8 243.5,294.3 244.5,298.1 245.5,302.2 246.5,306.5 247.5,311.1 248.5,316.0 249.5,321.0 250.5,326.2 251.5,331.6 252.5,337.1 253.5,342.8 254.5,348.5 255.5,354.3 256.5,360.1 257.5,365.9 258.5,371.8 259.5,377.6 260.5,383.3 261.5,389.0 262.5,394.5 263.5,399.9 264.5,405.2 265.5,410.2 266.5,415.1 267.5,419.8 268.5,424.2 269.5,428.3 270.5,432.2 271.5,435.8 272.5,439.0 273.5,442.0 274.5,444.6 275.5,446.8 276.5,448.7 277.5,450.2 278.5,451.4 279.5,452.2 280.5,452.5 281.5,452.6 282.5,452.2 283.5,451.4 284.5,450.3 285.5,448.8 286.5,446.9 287.5,444.7 288.5,442.1 289.5,439.2 290.5,435.9 291.5,432.4 292.5,428.5 293.5,424.4 294.5,420.0 295.5,415.3 296.5,410.5 297.5,405.4 298.5,400.2 299.5,394.8 300.5,389.2 301.5,383.6 302.5,377.9 303.5,372.1 304.5,366.2 305.5,360.4 306.5,354.6 307.5,348.8 308.5,343.0 309.5,337.4 310.5,331.9 311.5,326.5 312.5,321.3 313.5,316.2 314.5,311.4 315.5,306.8 316.5,302.4 317.5,298.3 318.5,294.5 319.5,290.9 320.5,287.7 321.5,284.8 322.5,282.3 323.5,280.1 324.5,278.2 325.5,276.8 326.5,275.7 327.5,275.0 328.5,274.6 329.5,274.7 330.5,275.1 331.5,275.9 332.5,277.1 333.5,278.7 334.5,280.6 335.5,282.9 336.5,285.5 337.5,288.5 338.5,291.8 339.5,295.4 340.5,299.3 341.5,303.5 342.5,307.9 343.5,312.6 344.5,317.5 345.5,322.6 346.5,327.8 347.5,333.3 348.5,338.8 349.5,344.5 350.5,350.2 351.5,356.0 352.5,361.8 353.5,367.7 354.5,373.5 355.5,379.3 356.5,385.0 357.5,390.6 358.5,396.1 359.5,401.5 360.5,406.7 361.5,411.7 362.5,416.5 363.5,421.1 364.5,425.4 365.5,429.5 366.5,433.3 367.5,436.8 368.5,439.9 369.5,442.8 370.5,445.3 371.5,447.4 372.5,449.2 373.5,450.6 374.5,451.7 375.5,452.3 376.5,452.6 377.5,452.5 378.5,452.0 379.5,451.1 380.5,449.9 381.5,448.3 382.5,446.3 383.5,443.9 384.5,441.3 385.5,438.2 386.5,434.9 387.5,431.2 388.5,427.3 389.5,423.1 390.5,418.6 391.5,413.9 392.5,409.0 393.5,403.9 394.5,398.6 395.5,393.1 396.5,387.6 397.5,381.9 398.5,376.1 399.5,370.3 400.5,364.5 401.5,358.6 402.5,352.8 403.5,347.0 404.5,341.3 405.5,335.7 406.5,330.3 407.5,324.9 408.5,319.7 409.5,314.7 410.5,310.0 411.5,305.4 412.5,301.1 413.5,297.1 414.5,293.4 415.5,289.9 416.5,286.8 417.5,284.0 418.5,281.6 419.5,279.5 420.5,277.8 421.5,276.4 422.5,275.4 423.5,274.8 424.5,274.6 425.5,274.8 426.5,275.3 427.5,276.2 428.5,277.5 429.5,279.2 430.5,281.2 431.5,283.6 432.5,286.4 433.5,289.4 434.5,292.8 435.5,296.5 436.5,300.5 437.5,304.8 438.5,309.3 439.5,314.0 440.5,319.0 441.5,324.1 442.5,329.4 443.5,334.9 444.5,340.5 445.5,346.2 446.5,351.9 447.5,357.8 448.5,363.6 449.5,369.4 450.5,375.3 451.5,381.0 452.5,386.7 453.5,392.3 454.5,397.8 455.5,403.1 456.5,408.2 457.5,413.2 458.5,417.9 459.5,422.4 460.5,426.7 461.5,430.7 462.5,434.4 463.5,437.8 464.5,440.8 465.5,443.6 466.5,446.0 467.5,448.0 468.5,449.7 469.5,451.0 470.5,451.9 471.5,452.4 472.5,452.6 473.5,452.4 474.5,451.8 475.5,450.8 476.5,449.4 477.5,447.7 478.5,445.6 479.5,443.2 480.5,440.4 481.5,437.3 482.5,433.8 483.5,430.1 484.5,426.1 485.5,421.8 486.5,417.2 487.5,412.5 488.5,407.5 489.5,402.3 490.5,396.9 491.5,391.5 492.5,385.9 493.5,380.2 494.5,374.4 495.5,368.6 496.5,362.7 497.5,356.9 498.5,351.1 499.5,345.3 500.5,339.6 501.5,334.1 502.5,328.6 503.5,323.3 504.5,318.2 505.5,313.3 506.5,308.6 507.5,304.1 508.5,299.9 509.5,296.0 510.5,292.3 511.5,289.0 512.5,285.9 513.5,283.3 514.5,280.9 515.5,278.9 516.5,277.3 517.5,276.1 518.5,275.2 519.5,274.7 520.5,274.6 521.5,274.9 522.5,275.5 523.5,276.6 524.5,278.0 525.5,279.8 526.5,281.9 527.5,284.4 528.5,287.3 529.5,290.4 530.5,293.9 531.5,297.7 532.5,301.8 533.5,306.1 534.5,310.7 535.5,315.5 536.5,320.5 537.5,325.7 538.5,331.1 539.5,336.6 540.5,342.2 541.5,347.9 542.5,353.7 543.5,359.5 544.5,365.4 545.5,371.2 546.5,377.0 547.5,382.7 548.5,388.4 549.5,393.9 550.5,399.4 551.5,404.6 552.5,409.7 553.5,414.6 554.5,419.3 555.5,423.7 556.5,427.9 557.5,431.8 558.5,435.4 559.5,438.7 560.5,441.7 561.5,444.3 562.5,446.6 563.5,448.5 564.5,450.1 565.5,451.3 566.5,452.1 567.5,452.5 568.5,452.6 569.5,452.2 570.5,451.5 571.5,450.4 572.5,449.0 573.5,447.1 574.5,444.9 575.5,442.4 576.5,439.5 577.5,436.3 578.5,432.7 579.5,428.9 580.5,424.8 581.5,420.4 582.5,415.8 583.5,411.0 584.5,405.9 585.5,400.7 586.5,395.3 587.5,389.8 588.5,384.2 589.5,378.4 590.5,372.6 591.5,366.8 592.5,361.0 593.5,355.1 594.5,349.3 595.5,343.6 596.5,338.0 597.5,332.4 598.5,327.0 599.5,321.8 600.5,316.7 601.5,311.9 602.5,307.2 603.5,302.8 604.5,298.7 605.5,294.8 606.5,291.3 607.5,288.0 608.5,285.1 609.5,282.5 610.5,280.3 611.5,278.4 612.5,276.9 613.5,275.8 614.5,275.0 615.5,274.6 616.5,274.7 617.5,275.0 618.5,275.8 619.5,277.0 620.5,278.5 621.5,280.4 622.5,282.6 623.5,285.2 624.5,288.2 625.5,291.4 626.5,295.0 627.5,298.9 628.5,303.0 629.5,307.4 630.5,312.1 631.5,317.0 632.5,322.0 633.5,327.3 634.5,332.7 635.5,338.2 636.5,343.9 637.5,349.6 638.5,355.4 639.5,361.3 640.5,367.1 641.5,372.9 642.5,378.7 643.5,384.4 644.5,390.1 645.5,395.6 646.5,401.0 647.5,406.2 648.5,411.2 649.5,416.1 650.5,420.7 651.5,425.0 652.5,429.1 653.5,432.9 654.5,436.4 655.5,439.6 656.5,442.5 657.5,445.0 658.5,447.2 659.5,449.0 660.5,450.5 661.5,451.6 662.5,452.3 663.5,452.6 664.5,452.5 665.5,452.1 666.5,451.2 667.5,450.0 668.5,448.4 669.5,446.5 670.5,444.2 671.5,441.5 672.5,438.6 673.5,435.2 674.5,431.6 675.5,427.7 676.5,423.5 677.5,419.1 678.5,414.4 679.5,409.5 680.5,404.4 681.5,399.1 682.5,393.7 683.5,388.1 684.5,382.4 685.5,376.7 686.5,370.9 687.5,365.1 688.5,359.2 689.5,353.4 690.5,347.6 691.5,341.9 692.5,336.3 693.5,330.8 694.5,325.4 695.5,320.2 696.5,315.2 697.5,310.4 698.5,305.9 699.5,301.6 700.5,297.5 701.5,293.7 702.5,290.3 703.5,287.1 704.5,284.3 705.5,281.8 706.5,279.7 707.5,277.9 708.5,276.5 709.5,275.5 710.5,274.9 711.5,274.6 712.5,274.7 713.5,275.2 714.5,276.1 715.5,277.4 716.5,279.0 717.5,281.0 718.5,283.4 719.5,286.1 720.5,289.1 721.5,292.5 722.5,296.1 723.5,300.1 724.5,304.3 725.5,308.8 726.5,313.5 727.5,318.5 728.5,323.6 729.5,328.9 730.5,334.4 731.5,339.9 732.5,345.6 733.5,351.4 734.5,357.2 735.5,363.0 736.5,368.9 737.5,374.7 738.5,380.4 739.5,386.1 740.5,391.7 741.5,397.2 742.5,402.6 743.5,407.7 744.5,412.7 745.5,417.5 746.5,422.0 747.5,426.3 748.5,430.3 749.5,434.0 750.5,437.4 751.5,440.5 752.5,443.3 753.5,445.7 754.5,447.8 755.5,449.5 756.5,450.9 757.5,451.8 758.5,452.4 759.5,452.6" stroke="#eeee28" stroke-width="1.6"/></g><path d="M394.5 147 H407 L400.75 158.5z" fill="#fff"/><path d="M43 357 L54.5 363.5 L43 370z" fill="#20e8ff"/><path d="M759.5 357 L747.8 363.5 L759.5 370z" fill="#ffff20"/></svg><span class="t " style="left:18.60px;top:130.00px;font-size:11px;letter-spacing:-1.337px;color:#2fdccc;">V</span><span class="t " style="left:4.20px;top:146.00px;font-size:11px;letter-spacing:-0.618px;color:#2fdccc;">1</span><span class="t " style="left:4.20px;top:188.00px;font-size:11px;letter-spacing:0.069px;color:#2fdccc;">0.8</span><span class="t " style="left:4.20px;top:230.00px;font-size:11px;letter-spacing:0.069px;color:#2fdccc;">0.6</span><span class="t " style="left:4.20px;top:272.00px;font-size:11px;letter-spacing:0.069px;color:#2fdccc;">0.4</span><span class="t " style="left:4.20px;top:314.00px;font-size:11px;letter-spacing:0.069px;color:#2fdccc;">0.2</span><span class="t " style="left:4.20px;top:356.00px;font-size:11px;letter-spacing:-0.618px;color:#2fdccc;">0</span><span class="t " style="left:4.20px;top:397.00px;font-size:11px;letter-spacing:0.136px;color:#2fdccc;">-0.2</span><span class="t " style="left:4.20px;top:439.00px;font-size:11px;letter-spacing:0.136px;color:#2fdccc;">-0.4</span><span class="t " style="left:4.20px;top:481.00px;font-size:11px;letter-spacing:0.136px;color:#2fdccc;">-0.6</span><span class="t " style="left:4.20px;top:523.00px;font-size:11px;letter-spacing:0.136px;color:#2fdccc;">-0.8</span><span class="t " style="left:4.20px;top:565.00px;font-size:11px;letter-spacing:-0.140px;color:#2fdccc;">-1</span><span class="t " style="left:32.90px;top:583.00px;font-size:11px;letter-spacing:-0.296px;color:#fff;word-spacing:0.596px;">-2.5 ms</span><span class="t " style="left:102.40px;top:583.00px;font-size:11px;letter-spacing:-0.600px;color:#fff;word-spacing:0.900px;">-2 ms</span><span class="t " style="left:173.50px;top:583.00px;font-size:11px;letter-spacing:-0.296px;color:#fff;word-spacing:0.596px;">-1.5 ms</span><span class="t " style="left:244.60px;top:583.00px;font-size:11px;letter-spacing:-0.725px;color:#fff;word-spacing:1.025px;">-1 ms</span><span class="t " style="left:315.20px;top:583.00px;font-size:11px;letter-spacing:-0.196px;color:#fff;word-spacing:0.496px;">-0.5 ms</span><span class="t " style="left:385.50px;top:583.00px;font-size:11px;letter-spacing:-0.679px;color:#fff;word-spacing:0.979px;">0 ms</span><span class="t " style="left:456.10px;top:583.00px;font-size:11px;letter-spacing:-0.362px;color:#fff;word-spacing:0.662px;">0.5 ms</span><span class="t " style="left:528.10px;top:583.00px;font-size:11px;letter-spacing:-1.246px;color:#fff;word-spacing:1.546px;">1 ms</span><span class="t " style="left:598.70px;top:583.00px;font-size:11px;letter-spacing:-0.462px;color:#fff;word-spacing:0.762px;">1.5 ms</span><span class="t " style="left:669.60px;top:583.00px;font-size:11px;letter-spacing:-0.979px;color:#fff;word-spacing:1.279px;">2 ms</span><span class="t " style="left:739.30px;top:583.00px;font-size:11px;letter-spacing:-0.462px;color:#fff;word-spacing:0.762px;">2.5 ms</span><div class="" style="position:absolute;left:42px;top:127px;width:80px;height:20px;background:#f0f0f0;border:2px solid #e01b1b;box-sizing:border-box;"></div><span class="t " style="left:69.40px;top:130.00px;font-size:11px;letter-spacing:0.165px;color:#000;font-weight:bold;">Stop</span><div class="" style="position:absolute;left:122px;top:127px;width:24px;height:20px;background:#000;border:1px solid #f0f030;box-sizing:border-box;"></div><span class="t " style="left:125.60px;top:130.00px;font-size:11px;letter-spacing:0.019px;color:#f4f428;font-weight:bold;">C1</span><div class="" style="position:absolute;left:146px;top:127px;width:22px;height:20px;background:#000;border:1px solid #b8c8c8;border-left-color:#444;border-bottom-color:#444;box-sizing:border-box;"></div><span class="t " style="left:149.00px;top:130.00px;font-size:11px;letter-spacing:-0.031px;color:#30e0f0;font-weight:bold;">C2</span><div class="" style="position:absolute;left:169px;top:127px;width:24.5px;height:20px;background:#000;border:1px solid #4a4a4a;box-sizing:border-box;"></div><span class="t " style="left:173.00px;top:130.00px;font-size:11px;letter-spacing:-0.440px;color:#e8501c;font-weight:bold;">M1</span><span class="t " style="left:196.50px;top:130.00px;font-size:11px;letter-spacing:-0.018px;color:#fff;">8192</span><span class="t " style="left:223.80px;top:130.00px;font-size:11px;letter-spacing:-0.609px;color:#fff;">samples</span><span class="t " style="left:263.60px;top:130.00px;font-size:11px;letter-spacing:0.613px;color:#fff;">at</span><span class="t " style="left:279.10px;top:130.00px;font-size:11px;letter-spacing:-0.205px;color:#fff;">1.587</span><span class="t " style="left:308.00px;top:130.00px;font-size:11px;letter-spacing:-0.836px;color:#fff;">MHz</span><span class="t " style="left:333.20px;top:130.00px;font-size:11px;letter-spacing:-1.457px;color:#fff;">|</span><span class="t " style="left:339.30px;top:130.00px;font-size:11px;letter-spacing:-0.107px;color:#fff;">2017-04-01</span><span class="t " style="left:399.20px;top:130.00px;font-size:11px;letter-spacing:-0.011px;color:#fff;">15:42:00.515</span><svg style="left:631px;top:129px" width="16" height="15" viewBox="0 0 16 15">
<path d="M10 9.5 L14.8 14" stroke="#b0b0b0" stroke-width="2.4" stroke-linecap="round"/>
<circle cx="6.6" cy="6.3" r="5.5" fill="#2254a4" stroke="#c4d2e6" stroke-width="1.6"/>
<circle cx="6.6" cy="6.3" r="3" fill="#3f7fd6"/>
<path d="M6.6 3.8v4.6" stroke="#fff" stroke-width="1.5"/></svg><svg style="left:660.5px;top:129px" width="13" height="14" viewBox="0 0 13 14"><rect x="0.3" y="9" width="12.4" height="3.6" fill="#9c9c9c"/><path d="M0.3 10.8h12.4" stroke="#6c6c6c" stroke-width="1" stroke-dasharray="1.2 1.2"/><path d="M1.5 1 L7.5 7.5 M1.5 1 V5 M1.5 1 H5.5" stroke="#2272d4" stroke-width="1.4" fill="none"/></svg><svg style="left:688.6px;top:129px" width="13" height="14" viewBox="0 0 13 14"><rect x="0.3" y="9" width="12.4" height="3.6" fill="#9c9c9c"/><path d="M0.3 10.8h12.4" stroke="#6c6c6c" stroke-width="1" stroke-dasharray="1.2 1.2"/><path d="M2 0.5 V8.2 M2 4 H12.5" stroke="#2272d4" stroke-width="1.3" fill="none"/></svg><svg style="left:716.8px;top:129px" width="13" height="14" viewBox="0 0 13 14"><rect x="0.3" y="9" width="12.4" height="3.6" fill="#9c9c9c"/><path d="M0.3 10.8h12.4" stroke="#6c6c6c" stroke-width="1" stroke-dasharray="1.2 1.2"/><path d="M2 0.5 V8.2 M2 1.6 H12.8 M2 5.3 H8.5" stroke="#2272d4" stroke-width="1.3" fill="none"/></svg><div class="" style="position:absolute;left:738px;top:128px;width:21px;height:18px;background:#e1e1e1;border:1px solid #a9a9a9;box-sizing:border-box;"></div><svg style="left:741.2px;top:129.8px" width="14" height="14" viewBox="-7 -7 14 14">
<defs><linearGradient id="gg1" x1="0" y1="0" x2="1" y2="1"><stop offset="0" stop-color="#e4e8ea"/><stop offset=".5" stop-color="#a2a9ad"/><stop offset="1" stop-color="#5a6165"/></linearGradient></defs>
<path d="M3.99 -0.96L5.65 -0.76L5.65 0.76L3.99 0.96L3.50 2.14L4.53 3.46L3.46 4.53L2.14 3.50L0.96 3.99L0.76 5.65L-0.76 5.65L-0.96 3.99L-2.14 3.50L-3.46 4.53L-4.53 3.46L-3.50 2.14L-3.99 0.96L-5.65 0.76L-5.65 -0.76L-3.99 -0.96L-3.50 -2.14L-4.53 -3.46L-3.46 -4.53L-2.14 -3.50L-0.96 -3.99L-0.76 -5.65L0.76 -5.65L0.96 -3.99L2.14 -3.50L3.46 -4.53L4.53 -3.46L3.50 -2.14z" fill="url(#gg1)" stroke="#858c90" stroke-width=".6" transform="rotate(12)"/>
<circle r="2.5" fill="#e6eaec"/>
<path d="M-1.2 -2.6 A2.8 2.8 0 0 0 1.6 2.6 A3.6 3.6 0 0 1 -1.2 -2.6z" fill="#3f4a50" transform="translate(-0.9 0)"/>
<path d="M1.5 3.4 L3.6 2.2 L4.2 4.0 L2.4 4.6z" fill="#4a5256"/></svg><div class="" style="position:absolute;left:761px;top:128px;width:19px;height:18px;background:#e8e8e8;"></div><span class="t " style="left:767.80px;top:130.00px;font-size:10.5px;letter-spacing:0.197px;color:#000;font-weight:bold;">Y</span><div class="" style="position:absolute;left:780px;top:127px;width:188px;height:473px;background:#f0f0f0;"></div><div class="" style="position:absolute;left:780px;top:127px;width:2px;height:473px;background:#fbfbfb;"></div><div class="" style="position:absolute;left:782px;top:128.5px;width:16px;height:15.5px;background:#b7d5f5;border:1px solid #a9cbef;box-sizing:border-box;"></div><svg style="left:785px;top:134.5px" width="12" height="7" viewBox="0 0 12 7">
<path d="M0.5 3.5 L4.3 0.9 V2.2 H11 V4.8 H4.3 V6.1z" fill="#7cc566" stroke="#8fcf80" stroke-width=".5"/></svg><div class="" style="position:absolute;left:946px;top:144px;width:1px;height:456px;background:#fff;"></div><svg style="left:951px;top:151.8px" width="7.399999999999977" height="5.0" viewBox="0 0 9 5"><path d="M0.5 4.5 L4.5 0.5 L8.5 4.5" fill="none" stroke="#b2b2b2" stroke-width="1.9"/></svg><svg style="left:951px;top:586.3px" width="7.399999999999977" height="5.2000000000000455" viewBox="0 0 9 5"><path d="M0.5 0.5 L4.5 4.5 L8.5 0.5" fill="none" stroke="#b2b2b2" stroke-width="1.9"/></svg><div class="" style="position:absolute;left:0px;top:600px;width:968px;height:1px;background:#b9b9b9;"></div><div class="" style="position:absolute;left:0px;top:601px;width:968px;height:3px;background:#f6f6f6;"></div><div class="" style="position:absolute;left:966px;top:48px;width:2px;height:552px;background:#f4f4f4;"></div><div class="" style="position:absolute;left:783.3px;top:146px;width:159.70000000000005px;height:87px;background:#f0f0f0;border-style:solid;border-color:#fff;border-width:4.5px 5px 4px 3.5px;box-sizing:border-box;"></div><div class="" style="position:absolute;left:787px;top:152px;width:13px;height:13px;background:#fff;border:1px solid #333;box-sizing:border-box;"></div><svg style="left:788px;top:153px" width="11" height="11" viewBox="0 0 11 11"><path d="M1.5 5.6 L4.2 8.4 L9.6 2.4" fill="none" stroke="#1a1a1a" stroke-width="1.25"/></svg><span class="t " style="left:804.70px;top:151.00px;font-size:11px;letter-spacing:-0.609px;color:#000;">Time</span><div class="" style="position:absolute;left:917px;top:151px;width:21px;height:15px;background:#e1e1e1;border:1px solid #a9a9a9;box-sizing:border-box;"></div><svg style="left:920.2px;top:151.3px" width="14" height="14" viewBox="-7 -7 14 14">
<defs><linearGradient id="gg2" x1="0" y1="0" x2="1" y2="1"><stop offset="0" stop-color="#e4e8ea"/><stop offset=".5" stop-color="#a2a9ad"/><stop offset="1" stop-color="#5a6165"/></linearGradient></defs>
<path d="M3.99 -0.96L5.65 -0.76L5.65 0.76L3.99 0.96L3.50 2.14L4.53 3.46L3.46 4.53L2.14 3.50L0.96 3.99L0.76 5.65L-0.76 5.65L-0.96 3.99L-2.14 3.50L-3.46 4.53L-4.53 3.46L-3.50 2.14L-3.99 0.96L-5.65 0.76L-5.65 -0.76L-3.99 -0.96L-3.50 -2.14L-4.53 -3.46L-3.46 -4.53L-2.14 -3.50L-0.96 -3.99L-0.76 -5.65L0.76 -5.65L0.96 -3.99L2.14 -3.50L3.46 -4.53L4.53 -3.46L3.50 -2.14z" fill="url(#gg2)" stroke="#858c90" stroke-width=".6" transform="rotate(12)"/>
<circle r="2.5" fill="#e6eaec"/>
<path d="M-1.2 -2.6 A2.8 2.8 0 0 0 1.6 2.6 A3.6 3.6 0 0 1 -1.2 -2.6z" fill="#3f4a50" transform="translate(-0.9 0)"/>
<path d="M1.5 3.4 L3.6 2.2 L4.2 4.0 L2.4 4.6z" fill="#4a5256"/></svg><span class="t " style="left:789.60px;top:170.00px;font-size:11px;letter-spacing:-0.243px;color:#000;">Position:</span><div class="edit" style="position:absolute;left:850px;top:168px;width:88px;height:19.5px;"></div><span class="t " style="left:855.00px;top:171.00px;font-size:11px;letter-spacing:-0.687px;color:#000;word-spacing:0.987px;">0 s</span><svg style="left:924.5px;top:176.45px" width="8.799999999999955" height="4.600000000000023" viewBox="0 0 9 5"><path d="M0.5 0.5 L4.5 4.5 L8.5 0.5" fill="none" stroke="#444" stroke-width="1.1"/></svg><span class="t " style="left:789.60px;top:191.00px;font-size:11px;letter-spacing:-0.366px;color:#000;">Base:</span><div class="edit" style="position:absolute;left:850px;top:189.5px;width:88px;height:19.0px;"></div><span class="t " style="left:855.00px;top:192.00px;font-size:11px;letter-spacing:-0.127px;color:#000;word-spacing:0.427px;">500 us/div</span><svg style="left:924.5px;top:197.7px" width="8.799999999999955" height="4.600000000000023" viewBox="0 0 9 5"><path d="M0.5 0.5 L4.5 4.5 L8.5 0.5" fill="none" stroke="#444" stroke-width="1.1"/></svg><div class="" style="position:absolute;left:788px;top:210.2px;width:150px;height:18.5px;background:#b5d6f6;border:1px solid #a8caee;box-sizing:border-box;"></div><svg style="left:859.2px;top:214.2px" width="10" height="13.600000000000023" viewBox="0 0 10 13.600000000000023"><path d="M3.5 0.5 H6.5 V8.400000000000023 H9.1 L5 13.200000000000022 L0.9 8.400000000000023 H3.5z" fill="#74c058" stroke="#4a9a38" stroke-width=".8"/></svg><div class="btn" style="position:absolute;left:784.5px;top:237.5px;width:157.5px;height:21.0px;"></div><svg style="left:823px;top:241px" width="15" height="14" viewBox="0 0 15 14">
<path d="M5.4 0.6h4.2v4.3H14v4.2H9.6v4.3H5.4V9.1H1V4.9h4.4z" fill="#6ac844" stroke="#3f9a2a" stroke-width=".8"/>
<path d="M6.2 1.5h2.4v4.3h4.3" fill="none" stroke="#a8e88c" stroke-width=".9"/></svg><span class="t " style="left:842.20px;top:241.00px;font-size:11px;letter-spacing:-0.360px;color:#000;word-spacing:0.660px;">Add Channel</span><svg style="left:928.4px;top:246px" width="8.0" height="4.199999999999989" viewBox="0 0 8 4"><path d="M0 0h8L4 4z" fill="#000"/></svg><div class="" style="position:absolute;left:783.3px;top:260.5px;width:159.70000000000005px;height:68.5px;background:#f0f0f0;border-style:solid;border-color:#ffff1e;border-width:5.3px 5.2px 4.6px 3.5px;box-sizing:border-box;"></div><div class="" style="position:absolute;left:787px;top:267.0px;width:13px;height:13.0px;background:#fff;border:1px solid #333;box-sizing:border-box;"></div><svg style="left:788px;top:268.0px" width="11" height="11" viewBox="0 0 11 11"><path d="M1.5 5.6 L4.2 8.4 L9.6 2.4" fill="none" stroke="#1a1a1a" stroke-width="1.25"/></svg><span class="t " style="left:804.70px;top:266.00px;font-size:11px;letter-spacing:-0.294px;color:#000;word-spacing:0.594px;">Channel 1</span><div class="" style="position:absolute;left:917px;top:266.0px;width:21px;height:15.0px;background:#e1e1e1;border:1px solid #a9a9a9;box-sizing:border-box;"></div><svg style="left:920.2px;top:266.3px" width="14" height="14" viewBox="-7 -7 14 14">
<defs><linearGradient id="gg3" x1="0" y1="0" x2="1" y2="1"><stop offset="0" stop-color="#e4e8ea"/><stop offset=".5" stop-color="#a2a9ad"/><stop offset="1" stop-color="#5a6165"/></linearGradient></defs>
<path d="M3.99 -0.96L5.65 -0.76L5.65 0.76L3.99 0.96L3.50 2.14L4.53 3.46L3.46 4.53L2.14 3.50L0.96 3.99L0.76 5.65L-0.76 5.65L-0.96 3.99L-2.14 3.50L-3.46 4.53L-4.53 3.46L-3.50 2.14L-3.99 0.96L-5.65 0.76L-5.65 -0.76L-3.99 -0.96L-3.50 -2.14L-4.53 -3.46L-3.46 -4.53L-2.14 -3.50L-0.96 -3.99L-0.76 -5.65L0.76 -5.65L0.96 -3.99L2.14 -3.50L3.46 -4.53L4.53 -3.46L3.50 -2.14z" fill="url(#gg3)" stroke="#858c90" stroke-width=".6" transform="rotate(12)"/>
<circle r="2.5" fill="#e6eaec"/>
<path d="M-1.2 -2.6 A2.8 2.8 0 0 0 1.6 2.6 A3.6 3.6 0 0 1 -1.2 -2.6z" fill="#3f4a50" transform="translate(-0.9 0)"/>
<path d="M1.5 3.4 L3.6 2.2 L4.2 4.0 L2.4 4.6z" fill="#4a5256"/></svg><span class="t " style="left:789.60px;top:285.00px;font-size:11px;letter-spacing:0.229px;color:#000;">Offset:</span><div class="edit" style="position:absolute;left:850px;top:283.1px;width:88px;height:19.399999999999977px;"></div><span class="t " style="left:855.00px;top:286.00px;font-size:11px;letter-spacing:-1.405px;color:#000;word-spacing:1.705px;">0 V</span><svg style="left:924.5px;top:291.5px" width="8.799999999999955" height="4.600000000000023" viewBox="0 0 9 5"><path d="M0.5 0.5 L4.5 4.5 L8.5 0.5" fill="none" stroke="#444" stroke-width="1.1"/></svg><span class="t " style="left:789.60px;top:306.00px;font-size:11px;letter-spacing:-0.278px;color:#000;">Range:</span><div class="edit" style="position:absolute;left:850px;top:304.2px;width:88px;height:19.5px;"></div><span class="t " style="left:855.00px;top:307.00px;font-size:11px;letter-spacing:-0.336px;color:#000;word-spacing:0.636px;">500 mV/div</span><svg style="left:924.5px;top:312.65px" width="8.799999999999955" height="4.600000000000023" viewBox="0 0 9 5"><path d="M0.5 0.5 L4.5 4.5 L8.5 0.5" fill="none" stroke="#444" stroke-width="1.1"/></svg><div class="" style="position:absolute;left:783.3px;top:329.5px;width:159.70000000000005px;height:68.5px;background:#f0f0f0;border-style:solid;border-color:#1ee8fa;border-width:5.3px 5.2px 4.6px 3.5px;box-sizing:border-box;"></div><div class="" style="position:absolute;left:787px;top:336.0px;width:13px;height:13.0px;background:#fff;border:1px solid #333;box-sizing:border-box;"></div><svg style="left:788px;top:337.0px" width="11" height="11" viewBox="0 0 11 11"><path d="M1.5 5.6 L4.2 8.4 L9.6 2.4" fill="none" stroke="#1a1a1a" stroke-width="1.25"/></svg><span class="t " style="left:804.70px;top:335.00px;font-size:11px;letter-spacing:-0.294px;color:#000;word-spacing:0.594px;">Channel 2</span><div class="" style="position:absolute;left:917px;top:335.0px;width:21px;height:15.0px;background:#e1e1e1;border:1px solid #a9a9a9;box-sizing:border-box;"></div><svg style="left:920.2px;top:335.3px" width="14" height="14" viewBox="-7 -7 14 14">
<defs><linearGradient id="gg4" x1="0" y1="0" x2="1" y2="1"><stop offset="0" stop-color="#e4e8ea"/><stop offset=".5" stop-color="#a2a9ad"/><stop offset="1" stop-color="#5a6165"/></linearGradient></defs>
<path d="M3.99 -0.96L5.65 -0.76L5.65 0.76L3.99 0.96L3.50 2.14L4.53 3.46L3.46 4.53L2.14 3.50L0.96 3.99L0.76 5.65L-0.76 5.65L-0.96 3.99L-2.14 3.50L-3.46 4.53L-4.53 3.46L-3.50 2.14L-3.99 0.96L-5.65 0.76L-5.65 -0.76L-3.99 -0.96L-3.50 -2.14L-4.53 -3.46L-3.46 -4.53L-2.14 -3.50L-0.96 -3.99L-0.76 -5.65L0.76 -5.65L0.96 -3.99L2.14 -3.50L3.46 -4.53L4.53 -3.46L3.50 -2.14z" fill="url(#gg4)" stroke="#858c90" stroke-width=".6" transform="rotate(12)"/>
<circle r="2.5" fill="#e6eaec"/>
<path d="M-1.2 -2.6 A2.8 2.8 0 0 0 1.6 2.6 A3.6 3.6 0 0 1 -1.2 -2.6z" fill="#3f4a50" transform="translate(-0.9 0)"/>
<path d="M1.5 3.4 L3.6 2.2 L4.2 4.0 L2.4 4.6z" fill="#4a5256"/></svg><span class="t " style="left:789.60px;top:354.00px;font-size:11px;letter-spacing:0.229px;color:#000;">Offset:</span><div class="edit" style="position:absolute;left:850px;top:352.1px;width:88px;height:19.399999999999977px;"></div><span class="t " style="left:855.00px;top:355.00px;font-size:11px;letter-spacing:-1.405px;color:#000;word-spacing:1.705px;">0 V</span><svg style="left:924.5px;top:360.5px" width="8.799999999999955" height="4.600000000000023" viewBox="0 0 9 5"><path d="M0.5 0.5 L4.5 4.5 L8.5 0.5" fill="none" stroke="#444" stroke-width="1.1"/></svg><span class="t " style="left:789.60px;top:375.00px;font-size:11px;letter-spacing:-0.278px;color:#000;">Range:</span><div class="edit" style="position:absolute;left:850px;top:373.2px;width:88px;height:19.5px;"></div><span class="t " style="left:855.00px;top:376.00px;font-size:11px;letter-spacing:-0.336px;color:#000;word-spacing:0.636px;">200 mV/div</span><svg style="left:924.5px;top:381.65px" width="8.799999999999955" height="4.600000000000023" viewBox="0 0 9 5"><path d="M0.5 0.5 L4.5 4.5 L8.5 0.5" fill="none" stroke="#444" stroke-width="1.1"/></svg><div class="" style="position:absolute;left:783.3px;top:399px;width:159.70000000000005px;height:24.600000000000023px;background:#f0f0f0;border-style:solid;border-color:#f84c08;border-width:4.2px 5.2px 3.9px 3.5px;box-sizing:border-box;"></div><div class="" style="position:absolute;left:787px;top:405px;width:13px;height:13px;background:#fff;border:1px solid #333;box-sizing:border-box;"></div><span class="t " style="left:804.70px;top:404.00px;font-size:11px;letter-spacing:-0.146px;color:#000;word-spacing:0.446px;">Math 1</span><div class="" style="position:absolute;left:894px;top:404.5px;width:21px;height:14.0px;background:#e1e1e1;border:1px solid #a9a9a9;box-sizing:border-box;"></div><svg style="left:897.2px;top:404.3px" width="14" height="14" viewBox="-7 -7 14 14">
<defs><linearGradient id="gg5" x1="0" y1="0" x2="1" y2="1"><stop offset="0" stop-color="#e4e8ea"/><stop offset=".5" stop-color="#a2a9ad"/><stop offset="1" stop-color="#5a6165"/></linearGradient></defs>
<path d="M3.99 -0.96L5.65 -0.76L5.65 0.76L3.99 0.96L3.50 2.14L4.53 3.46L3.46 4.53L2.14 3.50L0.96 3.99L0.76 5.65L-0.76 5.65L-0.96 3.99L-2.14 3.50L-3.46 4.53L-4.53 3.46L-3.50 2.14L-3.99 0.96L-5.65 0.76L-5.65 -0.76L-3.99 -0.96L-3.50 -2.14L-4.53 -3.46L-3.46 -4.53L-2.14 -3.50L-0.96 -3.99L-0.76 -5.65L0.76 -5.65L0.96 -3.99L2.14 -3.50L3.46 -4.53L4.53 -3.46L3.50 -2.14z" fill="url(#gg5)" stroke="#858c90" stroke-width=".6" transform="rotate(12)"/>
<circle r="2.5" fill="#e6eaec"/>
<path d="M-1.2 -2.6 A2.8 2.8 0 0 0 1.6 2.6 A3.6 3.6 0 0 1 -1.2 -2.6z" fill="#3f4a50" transform="translate(-0.9 0)"/>
<path d="M1.5 3.4 L3.6 2.2 L4.2 4.0 L2.4 4.6z" fill="#4a5256"/></svg><div class="btn" style="position:absolute;left:917px;top:404.5px;width:21px;height:14.0px;"></div><svg style="left:921.5px;top:406px" width="12" height="11" viewBox="0 0 12 11"><path d="M1 0.8 L11 10.2 M11 0.8 L1 10.2" stroke="#c4202a" stroke-width="1.7"/></svg><div class="" style="position:absolute;left:3px;top:581px;width:28px;height:18px;background:#e8e8e8;"></div><div class="" style="position:absolute;left:18px;top:582px;width:1px;height:16px;background:#a8a8a8;"></div><span class="t " style="left:6.80px;top:583.00px;font-size:10.5px;letter-spacing:-0.204px;color:#000;font-weight:bold;">X</span><svg style="left:21px;top:588.7px" width="7" height="3.699999999999932" viewBox="0 0 8 4"><path d="M0 0h8L4 4z" fill="#000"/></svg></body></html>
